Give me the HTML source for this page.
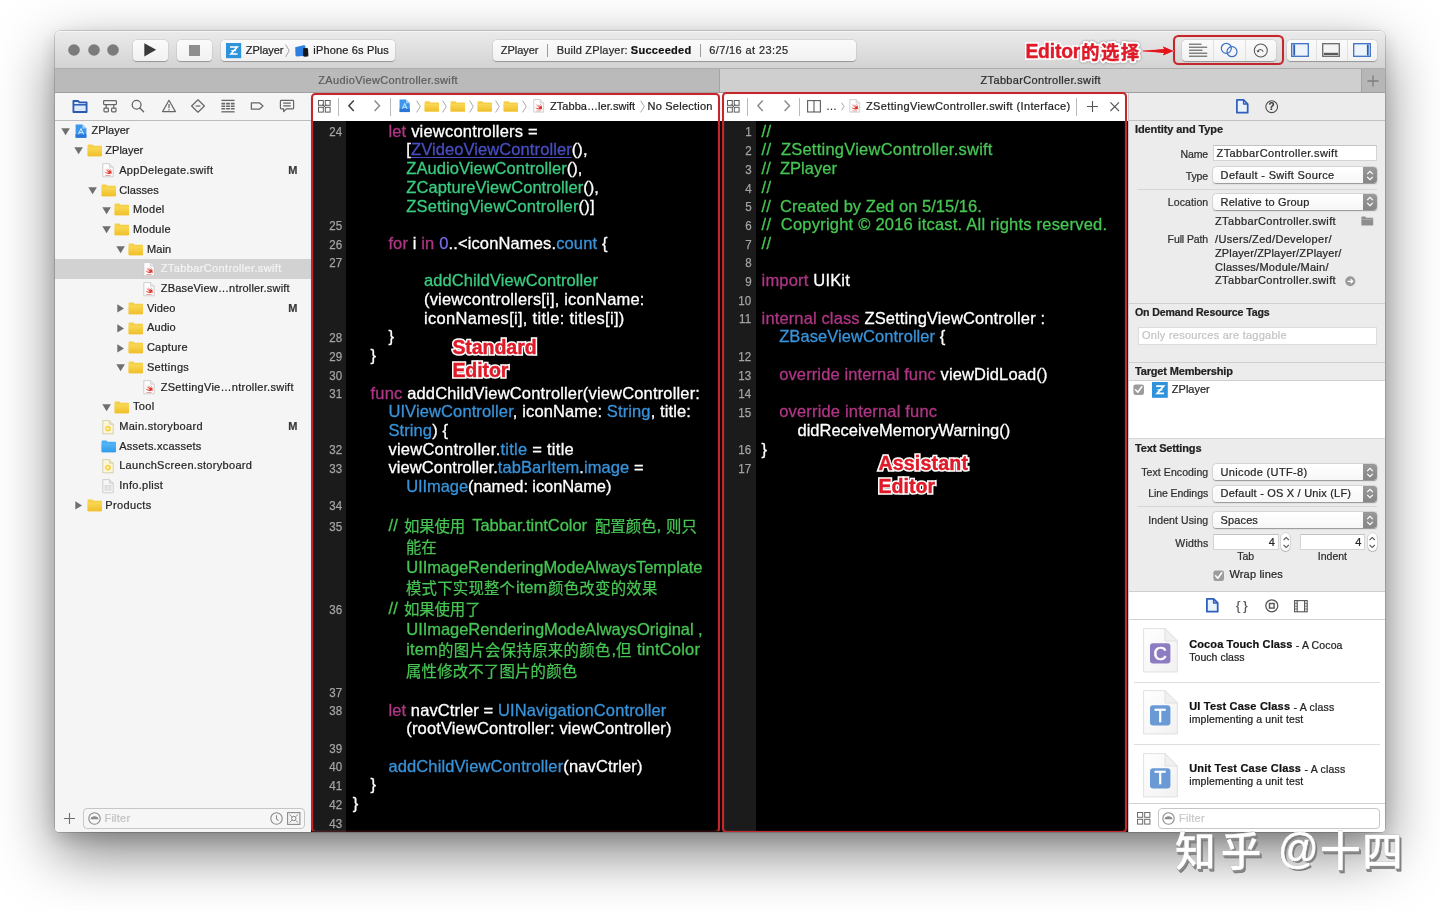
<!DOCTYPE html>
<html><head><meta charset="utf-8"><title>Xcode</title>
<style>
html,body{margin:0;padding:0;}
body{width:1440px;height:911px;position:relative;overflow:hidden;background:#fff;font-family:"Liberation Sans", sans-serif;}
.t{position:absolute;white-space:pre;line-height:1;-webkit-text-stroke:0.22px;}
</style></head><body>
<div style="position:absolute;left:0;top:0;width:1440px;height:911px;will-change:transform;">
<div style="position:absolute;left:55px;top:31px;width:1330px;height:801px;border-radius:5px 5px 4px 4px;background:#ececec;box-shadow:0 0 0 0.5px rgba(0,0,0,0.30),0 21px 56px 0 rgba(0,0,0,0.50),0 6px 18px rgba(0,0,0,0.14);"></div><div style="position:absolute;left:55px;top:31px;width:1330px;height:37px;border-radius:5px 5px 0 0;background:linear-gradient(#ebebeb,#d3d3d3);box-shadow:inset 0 1px 0 #f6f6f6;"></div><div style="position:absolute;left:55px;top:68px;width:1330px;height:1px;background:#adadad;"></div><div style="position:absolute;left:55px;top:69px;width:665px;height:23px;background:#bababa;"></div><div style="position:absolute;left:720px;top:69px;width:642px;height:23px;background:#cfcfcf;"></div><div style="position:absolute;left:719px;top:69px;width:1px;height:23px;background:#a5a5a5;"></div><div style="position:absolute;left:1362px;top:69px;width:23px;height:23px;background:#b6b6b6;"></div><div style="position:absolute;left:1361px;top:69px;width:1px;height:23px;background:#a5a5a5;"></div><div style="position:absolute;left:55px;top:92px;width:1330px;height:1px;background:#a0a0a0;"></div><svg style="position:absolute;left:1367px;top:75px;overflow:visible;" width="12" height="12" viewBox="0 0 12 12"><path d="M6 0.5V11.5M0.5 6H11.5" stroke="#7d7d7d" stroke-width="1.3" fill="none"/></svg><span class="t" style="left:318.30px;top:74.89px;font-size:11px;color:#5c5c5c;letter-spacing:0.348px;">ZAudioViewController.swift</span><span class="t" style="left:980.50px;top:74.89px;font-size:11px;color:#2b2b2b;letter-spacing:0.348px;">ZTabbarController.swift</span><svg style="position:absolute;left:68px;top:44px;overflow:visible;" width="12" height="12" viewBox="0 0 12 12"><circle cx="6" cy="6" r="5.8" fill="#7b7b7b"/></svg><svg style="position:absolute;left:87.5px;top:44px;overflow:visible;" width="12" height="12" viewBox="0 0 12 12"><circle cx="6" cy="6" r="5.8" fill="#7b7b7b"/></svg><svg style="position:absolute;left:107px;top:44px;overflow:visible;" width="12" height="12" viewBox="0 0 12 12"><circle cx="6" cy="6" r="5.8" fill="#7b7b7b"/></svg><div style="position:absolute;left:132.5px;top:40px;width:35.5px;height:20.5px;border-radius:4px;background:linear-gradient(#fbfbfb,#f1f1f1);box-shadow:0 0.5px 1px rgba(0,0,0,0.28),0 0 0 0.5px rgba(0,0,0,0.08);"></div><svg style="position:absolute;left:144px;top:43.3px;overflow:visible;" width="12.5" height="13.6" viewBox="0 0 12.5 13.6"><path d="M0.3 0.2L12.2 6.8L0.3 13.4Z" fill="#3a3a3a"/></svg><div style="position:absolute;left:176.5px;top:40px;width:35.5px;height:20.5px;border-radius:4px;background:linear-gradient(#fbfbfb,#f1f1f1);box-shadow:0 0.5px 1px rgba(0,0,0,0.28),0 0 0 0.5px rgba(0,0,0,0.08);"></div><div style="position:absolute;left:188.8px;top:44.6px;width:11.6px;height:11.2px;background:#8e8e8e;"></div><div style="position:absolute;left:221px;top:40px;width:174px;height:20.5px;border-radius:4px;background:linear-gradient(#fbfbfb,#f1f1f1);box-shadow:0 0.5px 1px rgba(0,0,0,0.28),0 0 0 0.5px rgba(0,0,0,0.08);"></div><svg style="position:absolute;left:225.8px;top:42.5px;overflow:visible;" width="15.2" height="15.2" viewBox="0 0 16 16"><rect width="16" height="16" fill="#2f93dc"/><path d="M4.2 4.2H11.8L5.2 11.6H12.2" stroke="#fff" stroke-width="1.7" fill="none" stroke-linejoin="miter"/><path d="M5.5 8H10.6" stroke="#fff" stroke-width="1.1"/></svg><span class="t" style="left:245.80px;top:44.89px;font-size:11px;color:#222;letter-spacing:-0.029px;">ZPlayer</span><svg style="position:absolute;left:284.6px;top:43.6px;overflow:visible;" width="5" height="13.4" viewBox="0 0 5 13.4"><path d="M0.6 0.5L4.2 6.7L0.6 12.9" stroke="#9a9a9a" stroke-width="0.9" fill="none"/></svg><svg style="position:absolute;left:294px;top:44px;overflow:visible;" width="15" height="13" viewBox="0 0 15 13"><path d="M1.2 3.2L9.5 1.2C10.5 1 11.2 1.5 11.3 2.4L12 10.2C12 11 11.6 11.6 10.8 11.7L3 12.4C2.1 12.4 1.6 12 1.5 11.2Z" fill="#2d7fe0"/><path d="M9.2 4.3L12.6 3.9C13.4 3.8 13.9 4.3 14 5L14.4 11.2C14.4 12 14 12.5 13.2 12.6L10.4 12.8C9.6 12.8 9.2 12.4 9.1 11.6Z" fill="#15171c"/></svg><span class="t" style="left:313.30px;top:44.89px;font-size:11px;color:#222;letter-spacing:0.165px;">iPhone 6s Plus</span><div style="position:absolute;left:492.5px;top:40px;width:363px;height:20.5px;border-radius:4px;background:linear-gradient(#fbfbfb,#f1f1f1);box-shadow:0 0.5px 1px rgba(0,0,0,0.28),0 0 0 0.5px rgba(0,0,0,0.08);"></div><span class="t" style="left:500.80px;top:44.89px;font-size:11px;color:#2a2a2a;letter-spacing:-0.029px;">ZPlayer</span><div style="position:absolute;left:547px;top:44px;width:1px;height:13px;background:#9b9b9b;"></div><span class="t" style="left:556.70px;top:44.89px;font-size:11px;color:#2a2a2a;letter-spacing:0.185px;">Build ZPlayer: </span><span class="t" style="left:630.80px;top:44.89px;font-size:11px;color:#111;font-weight:700;letter-spacing:0.290px;">Succeeded</span><div style="position:absolute;left:700px;top:44px;width:1px;height:13px;background:#9b9b9b;"></div><span class="t" style="left:709.20px;top:44.89px;font-size:11px;color:#2a2a2a;letter-spacing:0.393px;">6/7/16 at 23:25</span><div style="position:absolute;left:1181.7px;top:40px;width:94.2px;height:20.5px;border-radius:4px;background:linear-gradient(#fbfbfb,#f1f1f1);box-shadow:0 0.5px 1px rgba(0,0,0,0.28),0 0 0 0.5px rgba(0,0,0,0.08);"></div><div style="position:absolute;left:1213px;top:40px;width:1px;height:20.5px;background:#e1e1e1;"></div><div style="position:absolute;left:1245px;top:40px;width:1px;height:20.5px;background:#e1e1e1;"></div><svg style="position:absolute;left:1188.5px;top:42.9px;overflow:visible;" width="19" height="14" viewBox="0 0 19 14"><path d="M0 1.2H12.5" stroke="#5a5a5a" stroke-width="1.1"/><path d="M0 4.2H18.2" stroke="#5a5a5a" stroke-width="1.1"/><path d="M0 7.2H13.5" stroke="#5a5a5a" stroke-width="1.1"/><path d="M0 10.2H18.2" stroke="#5a5a5a" stroke-width="1.1"/><path d="M0 13.2H18.2" stroke="#5a5a5a" stroke-width="1.1"/></svg><svg style="position:absolute;left:1220px;top:42px;overflow:visible;" width="20" height="16" viewBox="0 0 20 16"><circle cx="6.3" cy="6.3" r="5" fill="none" stroke="#3b6fc6" stroke-width="1.2"/><circle cx="12" cy="9.7" r="5" fill="none" stroke="#3b6fc6" stroke-width="1.2"/></svg><svg style="position:absolute;left:1253px;top:42.5px;overflow:visible;" width="16" height="16" viewBox="0 0 16 16"><circle cx="7.8" cy="7.5" r="6.5" fill="none" stroke="#5a5a5a" stroke-width="1.1"/><path d="M4.6 8.6C6 5.8 9 5.6 10.2 8.8" fill="none" stroke="#5a5a5a" stroke-width="1.1"/><path d="M3.6 7.2L4.5 9.6L6.8 8.6Z" fill="#5a5a5a"/></svg><div style="position:absolute;left:1286.7px;top:40px;width:90px;height:20.5px;border-radius:4px;background:linear-gradient(#fbfbfb,#f1f1f1);box-shadow:0 0.5px 1px rgba(0,0,0,0.28),0 0 0 0.5px rgba(0,0,0,0.08);"></div><div style="position:absolute;left:1316px;top:40px;width:1px;height:20.5px;background:#e1e1e1;"></div><div style="position:absolute;left:1346.5px;top:40px;width:1px;height:20.5px;background:#e1e1e1;"></div><svg style="position:absolute;left:1290.5px;top:43px;overflow:visible;" width="18" height="14" viewBox="0 0 18 14"><rect x="0.7" y="0.7" width="16.6" height="12.6" fill="#eef4fc" stroke="#3b70c5" stroke-width="1.3"/><path d="M3.2 1.5V12.5" stroke="#2a5cb0" stroke-width="1.8"/></svg><svg style="position:absolute;left:1322px;top:43px;overflow:visible;" width="18" height="14" viewBox="0 0 18 14"><rect x="0.7" y="0.7" width="16.6" height="12.6" fill="#f4f4f4" stroke="#6a6a6a" stroke-width="1.3"/><path d="M1.8 10.9H16.2" stroke="#5a5a5a" stroke-width="2.2"/></svg><svg style="position:absolute;left:1353.2px;top:43px;overflow:visible;" width="18" height="14" viewBox="0 0 18 14"><rect x="0.7" y="0.7" width="16.6" height="12.6" fill="#eef4fc" stroke="#3b70c5" stroke-width="1.3"/><path d="M14.8 1.5V12.5" stroke="#2a5cb0" stroke-width="1.8"/></svg><div style="position:absolute;left:55px;top:93px;width:256px;height:739px;background:#f5f5f5;border-radius:0 0 0 4px;"></div><div style="position:absolute;left:311px;top:93px;width:818px;height:28px;background:#fff;"></div><div style="position:absolute;left:311px;top:120.5px;width:818px;height:711.5px;background:#000;"></div><div style="position:absolute;left:1129px;top:93px;width:256px;height:739px;background:#ececec;border-radius:0 0 4px 0;"></div><div style="position:absolute;left:312px;top:94px;width:406px;height:27px;background:#fff;"></div><div style="position:absolute;left:312px;top:120.5px;width:34px;height:711.5px;background:#1b1b1b;"></div><div style="position:absolute;left:346px;top:120.5px;width:374px;height:711.5px;background:#000;"></div><div style="position:absolute;left:723px;top:94px;width:404px;height:27px;background:#fff;"></div><div style="position:absolute;left:723px;top:120.5px;width:32.5px;height:711.5px;background:#1b1b1b;"></div><div style="position:absolute;left:755.5px;top:120.5px;width:371.5px;height:711.5px;background:#000;"></div><svg style="position:absolute;left:71.6px;top:99.0px;overflow:visible;" width="16" height="14" viewBox="0 0 16 14"><path d="M1.4 2H6.2L7.4 3.4H14.6V13H1.4Z" fill="#dbe9fb" stroke="#2a59b0" stroke-width="1.8" stroke-linejoin="round"/><path d="M1.4 5.8H14.6" stroke="#2a59b0" stroke-width="1.5"/></svg><svg style="position:absolute;left:101.5px;top:99.0px;overflow:visible;" width="16" height="14" viewBox="0 0 16 14"><g fill="none" stroke="#666" stroke-width="1.2"><rect x="1.6" y="1.6" width="12.8" height="4" rx="0.8"/><path d="M4.2 5.6V9.2M11.8 5.6V9.2"/><rect x="2" y="9.2" width="4.4" height="3.6" rx="0.8"/><rect x="9.6" y="9.2" width="4.4" height="3.6" rx="0.8"/></g></svg><svg style="position:absolute;left:130.0px;top:99.0px;overflow:visible;" width="16" height="14" viewBox="0 0 16 14"><g fill="none" stroke="#666" stroke-width="1.3"><circle cx="6.6" cy="5.8" r="4.4"/><path d="M9.8 9L13.6 12.8" stroke-linecap="round"/></g></svg><svg style="position:absolute;left:160.5px;top:99.0px;overflow:visible;" width="16" height="14" viewBox="0 0 16 14"><g fill="none" stroke="#666" stroke-width="1.2" stroke-linejoin="round"><path d="M8 1.2L14.4 12.6H1.6Z"/><path d="M8 5V9.2M8 10.3V11.4"/></g></svg><svg style="position:absolute;left:190.0px;top:99.0px;overflow:visible;" width="16" height="14" viewBox="0 0 16 14"><g fill="none" stroke="#666" stroke-width="1.2" stroke-linejoin="round"><path d="M8 0.8L14.4 7L8 13.2L1.6 7Z"/><path d="M5.6 7H10.4"/></g></svg><svg style="position:absolute;left:219.5px;top:99.0px;overflow:visible;" width="16" height="14" viewBox="0 0 16 14"><g fill="none" stroke="#666"><path d="M1.4 1.4H14.6" stroke-width="1.3"/><path d="M1.4 4.6H14.6M1.4 7.2H14.6M1.4 9.8H14.6" stroke-width="1.6" stroke-dasharray="3.8 0.9"/><path d="M1.4 12.8H14.6" stroke-width="1.3"/></g></svg><svg style="position:absolute;left:249.0px;top:99.0px;overflow:visible;" width="16" height="14" viewBox="0 0 16 14"><path d="M2.4 3.8H10.4L14 7L10.4 10.2H2.4Z" fill="none" stroke="#666" stroke-width="1.25" stroke-linejoin="round"/></svg><svg style="position:absolute;left:278.5px;top:99.0px;overflow:visible;" width="16" height="14" viewBox="0 0 16 14"><g fill="none" stroke="#666" stroke-width="1.2" stroke-linejoin="round"><path d="M2.2 1.4H13.8Q14.6 1.4 14.6 2.2V9Q14.6 9.8 13.8 9.8H7.4L4.6 12.6V9.8H2.2Q1.4 9.8 1.4 9V2.2Q1.4 1.4 2.2 1.4Z"/><path d="M4.2 4.2H11.8M4.2 6.8H11.8"/></g></svg><div style="position:absolute;left:55px;top:120px;width:256px;height:1px;background:#bcbcbc;"></div><svg style="position:absolute;left:60.49999999999999px;top:127.70000000000002px;overflow:visible;" width="9.2" height="7.4" viewBox="0 0 9.2 7.4"><path d="M0.3 0.3H8.9L4.6 7.2Z" fill="#6f6f6f"/></svg><svg style="position:absolute;left:74.9px;top:123.80000000000001px;overflow:visible;" width="12.0" height="14.4" viewBox="0 0 12 14.4"><path d="M0.6 0.6H7.4L11.4 4.4V13.8H0.6Z" fill="#3c97ec"/><path d="M7.4 0.6V4.4H11.4Z" fill="#9fd0fb"/><path d="M0.6 10.2H11.4V13.8H0.6Z" fill="#2a76d6"/><path d="M3.4 10.4L6 4.6L8.6 10.4M4.3 8.6H7.7" fill="none" stroke="#d8ecff" stroke-width="1"/></svg><span class="t" style="left:91.50px;top:125.39px;font-size:11px;color:#262626;letter-spacing:0.013px;">ZPlayer</span><svg style="position:absolute;left:74.35px;top:147.41000000000003px;overflow:visible;" width="9.2" height="7.4" viewBox="0 0 9.2 7.4"><path d="M0.3 0.3H8.9L4.6 7.2Z" fill="#6f6f6f"/></svg><svg style="position:absolute;left:86.75px;top:144.31px;overflow:visible;" width="15.4" height="12.6" viewBox="0 0 15.4 12.6"><defs><linearGradient id="fg867150" x1="0" y1="0" x2="0" y2="1"><stop offset="0" stop-color="#f9d955"/><stop offset="1" stop-color="#f0be2a"/></linearGradient></defs><path d="M0.6 1.2Q0.6 0.4 1.4 0.4H5.4L6.6 1.8H14.2Q15 1.8 15 2.6V11.6Q15 12.3 14.2 12.3H1.4Q0.6 12.3 0.6 11.6Z" fill="#f5cf47"/><path d="M0.6 3.4H15V11.6Q15 12.3 14.2 12.3H1.4Q0.6 12.3 0.6 11.6Z" fill="url(#fg867150)"/></svg><span class="t" style="left:105.35px;top:145.10px;font-size:11px;color:#262626;letter-spacing:-0.008px;">ZPlayer</span><svg style="position:absolute;left:101.9px;top:163.42000000000002px;overflow:visible;" width="12.0" height="14.4" viewBox="0 0 12 14.4"><path d="M0.8 0.6H7.6L11.2 4.2V13.8H0.8Z" fill="#fdfdfd" stroke="#c4c4c4" stroke-width="0.8"/><path d="M7.6 0.6V4.2H11.2" fill="#ececec" stroke="#c4c4c4" stroke-width="0.7"/><path d="M3 5.2C4.6 6.9 6.2 8 7.6 8.6C6.4 7.4 5.4 6.2 4.8 5.2C6.4 6.6 8 7.6 9 8.2C8.6 7 8 5.8 7.2 5C9.2 6.4 10 8.6 9.4 10C9.8 10.4 10 11 9.8 11.2C9.4 10.6 8.8 10.4 8.2 10.7C6.2 11.5 3.8 10.6 2.4 8.6C4 9.6 5.6 9.9 6.8 9.4C5.2 8.2 3.8 6.6 3 5.2Z" fill="#e0362c"/><path d="M3.4 12.5H8.6" stroke="#e58a84" stroke-width="0.8"/></svg><span class="t" style="left:119.20px;top:164.81px;font-size:11px;color:#262626;letter-spacing:0.325px;">AppDelegate.swift</span><span class="t" style="left:288.20px;top:164.81px;font-size:11px;color:#3a3a3a;font-weight:700;letter-spacing:0.028px;">M</span><svg style="position:absolute;left:88.20000000000002px;top:186.83px;overflow:visible;" width="9.2" height="7.4" viewBox="0 0 9.2 7.4"><path d="M0.3 0.3H8.9L4.6 7.2Z" fill="#6f6f6f"/></svg><svg style="position:absolute;left:100.6px;top:183.73px;overflow:visible;" width="15.4" height="12.6" viewBox="0 0 15.4 12.6"><defs><linearGradient id="fg1006190" x1="0" y1="0" x2="0" y2="1"><stop offset="0" stop-color="#f9d955"/><stop offset="1" stop-color="#f0be2a"/></linearGradient></defs><path d="M0.6 1.2Q0.6 0.4 1.4 0.4H5.4L6.6 1.8H14.2Q15 1.8 15 2.6V11.6Q15 12.3 14.2 12.3H1.4Q0.6 12.3 0.6 11.6Z" fill="#f5cf47"/><path d="M0.6 3.4H15V11.6Q15 12.3 14.2 12.3H1.4Q0.6 12.3 0.6 11.6Z" fill="url(#fg1006190)"/></svg><span class="t" style="left:119.20px;top:184.52px;font-size:11px;color:#262626;letter-spacing:0.068px;">Classes</span><svg style="position:absolute;left:102.05000000000001px;top:206.54000000000002px;overflow:visible;" width="9.2" height="7.4" viewBox="0 0 9.2 7.4"><path d="M0.3 0.3H8.9L4.6 7.2Z" fill="#6f6f6f"/></svg><svg style="position:absolute;left:114.45000000000002px;top:203.44px;overflow:visible;" width="15.4" height="12.6" viewBox="0 0 15.4 12.6"><defs><linearGradient id="fg1144209" x1="0" y1="0" x2="0" y2="1"><stop offset="0" stop-color="#f9d955"/><stop offset="1" stop-color="#f0be2a"/></linearGradient></defs><path d="M0.6 1.2Q0.6 0.4 1.4 0.4H5.4L6.6 1.8H14.2Q15 1.8 15 2.6V11.6Q15 12.3 14.2 12.3H1.4Q0.6 12.3 0.6 11.6Z" fill="#f5cf47"/><path d="M0.6 3.4H15V11.6Q15 12.3 14.2 12.3H1.4Q0.6 12.3 0.6 11.6Z" fill="url(#fg1144209)"/></svg><span class="t" style="left:133.05px;top:204.23px;font-size:11px;color:#262626;letter-spacing:0.316px;">Model</span><svg style="position:absolute;left:102.05000000000001px;top:226.25000000000003px;overflow:visible;" width="9.2" height="7.4" viewBox="0 0 9.2 7.4"><path d="M0.3 0.3H8.9L4.6 7.2Z" fill="#6f6f6f"/></svg><svg style="position:absolute;left:114.45000000000002px;top:223.15px;overflow:visible;" width="15.4" height="12.6" viewBox="0 0 15.4 12.6"><defs><linearGradient id="fg1144229" x1="0" y1="0" x2="0" y2="1"><stop offset="0" stop-color="#f9d955"/><stop offset="1" stop-color="#f0be2a"/></linearGradient></defs><path d="M0.6 1.2Q0.6 0.4 1.4 0.4H5.4L6.6 1.8H14.2Q15 1.8 15 2.6V11.6Q15 12.3 14.2 12.3H1.4Q0.6 12.3 0.6 11.6Z" fill="#f5cf47"/><path d="M0.6 3.4H15V11.6Q15 12.3 14.2 12.3H1.4Q0.6 12.3 0.6 11.6Z" fill="url(#fg1144229)"/></svg><span class="t" style="left:133.05px;top:223.94px;font-size:11px;color:#262626;letter-spacing:0.279px;">Module</span><svg style="position:absolute;left:115.9px;top:245.96px;overflow:visible;" width="9.2" height="7.4" viewBox="0 0 9.2 7.4"><path d="M0.3 0.3H8.9L4.6 7.2Z" fill="#6f6f6f"/></svg><svg style="position:absolute;left:128.3px;top:242.85999999999999px;overflow:visible;" width="15.4" height="12.6" viewBox="0 0 15.4 12.6"><defs><linearGradient id="fg1283249" x1="0" y1="0" x2="0" y2="1"><stop offset="0" stop-color="#f9d955"/><stop offset="1" stop-color="#f0be2a"/></linearGradient></defs><path d="M0.6 1.2Q0.6 0.4 1.4 0.4H5.4L6.6 1.8H14.2Q15 1.8 15 2.6V11.6Q15 12.3 14.2 12.3H1.4Q0.6 12.3 0.6 11.6Z" fill="#f5cf47"/><path d="M0.6 3.4H15V11.6Q15 12.3 14.2 12.3H1.4Q0.6 12.3 0.6 11.6Z" fill="url(#fg1283249)"/></svg><span class="t" style="left:146.90px;top:243.65px;font-size:11px;color:#262626;letter-spacing:0.114px;">Main</span><div style="position:absolute;left:55px;top:259.37px;width:256px;height:19.2px;background:#d2d2d2;"></div><svg style="position:absolute;left:143.45px;top:261.97px;overflow:visible;" width="12.0" height="14.4" viewBox="0 0 12 14.4"><path d="M0.8 0.6H7.6L11.2 4.2V13.8H0.8Z" fill="#fdfdfd" stroke="#c4c4c4" stroke-width="0.8"/><path d="M7.6 0.6V4.2H11.2" fill="#ececec" stroke="#c4c4c4" stroke-width="0.7"/><path d="M3 5.2C4.6 6.9 6.2 8 7.6 8.6C6.4 7.4 5.4 6.2 4.8 5.2C6.4 6.6 8 7.6 9 8.2C8.6 7 8 5.8 7.2 5C9.2 6.4 10 8.6 9.4 10C9.8 10.4 10 11 9.8 11.2C9.4 10.6 8.8 10.4 8.2 10.7C6.2 11.5 3.8 10.6 2.4 8.6C4 9.6 5.6 9.9 6.8 9.4C5.2 8.2 3.8 6.6 3 5.2Z" fill="#e0362c"/><path d="M3.4 12.5H8.6" stroke="#e58a84" stroke-width="0.8"/></svg><span class="t" style="left:160.75px;top:263.36px;font-size:11px;color:#f4f4f4;letter-spacing:0.367px;">ZTabbarController.swift</span><svg style="position:absolute;left:143.45px;top:281.68px;overflow:visible;" width="12.0" height="14.4" viewBox="0 0 12 14.4"><path d="M0.8 0.6H7.6L11.2 4.2V13.8H0.8Z" fill="#fdfdfd" stroke="#c4c4c4" stroke-width="0.8"/><path d="M7.6 0.6V4.2H11.2" fill="#ececec" stroke="#c4c4c4" stroke-width="0.7"/><path d="M3 5.2C4.6 6.9 6.2 8 7.6 8.6C6.4 7.4 5.4 6.2 4.8 5.2C6.4 6.6 8 7.6 9 8.2C8.6 7 8 5.8 7.2 5C9.2 6.4 10 8.6 9.4 10C9.8 10.4 10 11 9.8 11.2C9.4 10.6 8.8 10.4 8.2 10.7C6.2 11.5 3.8 10.6 2.4 8.6C4 9.6 5.6 9.9 6.8 9.4C5.2 8.2 3.8 6.6 3 5.2Z" fill="#e0362c"/><path d="M3.4 12.5H8.6" stroke="#e58a84" stroke-width="0.8"/></svg><span class="t" style="left:160.75px;top:283.07px;font-size:11px;color:#262626;letter-spacing:0.189px;">ZBaseView…ntroller.swift</span><svg style="position:absolute;left:116.9px;top:304.19px;overflow:visible;" width="7.2" height="8.8" viewBox="0 0 7.2 8.8"><path d="M0.3 0.3V8.5L7 4.4Z" fill="#6f6f6f"/></svg><svg style="position:absolute;left:128.3px;top:301.99px;overflow:visible;" width="15.4" height="12.6" viewBox="0 0 15.4 12.6"><defs><linearGradient id="fg1283308" x1="0" y1="0" x2="0" y2="1"><stop offset="0" stop-color="#f9d955"/><stop offset="1" stop-color="#f0be2a"/></linearGradient></defs><path d="M0.6 1.2Q0.6 0.4 1.4 0.4H5.4L6.6 1.8H14.2Q15 1.8 15 2.6V11.6Q15 12.3 14.2 12.3H1.4Q0.6 12.3 0.6 11.6Z" fill="#f5cf47"/><path d="M0.6 3.4H15V11.6Q15 12.3 14.2 12.3H1.4Q0.6 12.3 0.6 11.6Z" fill="url(#fg1283308)"/></svg><span class="t" style="left:146.90px;top:302.78px;font-size:11px;color:#262626;letter-spacing:0.152px;">Video</span><span class="t" style="left:288.20px;top:302.78px;font-size:11px;color:#3a3a3a;font-weight:700;letter-spacing:0.028px;">M</span><svg style="position:absolute;left:116.9px;top:323.90000000000003px;overflow:visible;" width="7.2" height="8.8" viewBox="0 0 7.2 8.8"><path d="M0.3 0.3V8.5L7 4.4Z" fill="#6f6f6f"/></svg><svg style="position:absolute;left:128.3px;top:321.70000000000005px;overflow:visible;" width="15.4" height="12.6" viewBox="0 0 15.4 12.6"><defs><linearGradient id="fg1283328" x1="0" y1="0" x2="0" y2="1"><stop offset="0" stop-color="#f9d955"/><stop offset="1" stop-color="#f0be2a"/></linearGradient></defs><path d="M0.6 1.2Q0.6 0.4 1.4 0.4H5.4L6.6 1.8H14.2Q15 1.8 15 2.6V11.6Q15 12.3 14.2 12.3H1.4Q0.6 12.3 0.6 11.6Z" fill="#f5cf47"/><path d="M0.6 3.4H15V11.6Q15 12.3 14.2 12.3H1.4Q0.6 12.3 0.6 11.6Z" fill="url(#fg1283328)"/></svg><span class="t" style="left:146.90px;top:322.49px;font-size:11px;color:#262626;letter-spacing:0.152px;">Audio</span><svg style="position:absolute;left:116.9px;top:343.61px;overflow:visible;" width="7.2" height="8.8" viewBox="0 0 7.2 8.8"><path d="M0.3 0.3V8.5L7 4.4Z" fill="#6f6f6f"/></svg><svg style="position:absolute;left:128.3px;top:341.41px;overflow:visible;" width="15.4" height="12.6" viewBox="0 0 15.4 12.6"><defs><linearGradient id="fg1283347" x1="0" y1="0" x2="0" y2="1"><stop offset="0" stop-color="#f9d955"/><stop offset="1" stop-color="#f0be2a"/></linearGradient></defs><path d="M0.6 1.2Q0.6 0.4 1.4 0.4H5.4L6.6 1.8H14.2Q15 1.8 15 2.6V11.6Q15 12.3 14.2 12.3H1.4Q0.6 12.3 0.6 11.6Z" fill="#f5cf47"/><path d="M0.6 3.4H15V11.6Q15 12.3 14.2 12.3H1.4Q0.6 12.3 0.6 11.6Z" fill="url(#fg1283347)"/></svg><span class="t" style="left:146.90px;top:342.20px;font-size:11px;color:#262626;letter-spacing:0.251px;">Capture</span><svg style="position:absolute;left:115.9px;top:364.21999999999997px;overflow:visible;" width="9.2" height="7.4" viewBox="0 0 9.2 7.4"><path d="M0.3 0.3H8.9L4.6 7.2Z" fill="#6f6f6f"/></svg><svg style="position:absolute;left:128.3px;top:361.12px;overflow:visible;" width="15.4" height="12.6" viewBox="0 0 15.4 12.6"><defs><linearGradient id="fg1283367" x1="0" y1="0" x2="0" y2="1"><stop offset="0" stop-color="#f9d955"/><stop offset="1" stop-color="#f0be2a"/></linearGradient></defs><path d="M0.6 1.2Q0.6 0.4 1.4 0.4H5.4L6.6 1.8H14.2Q15 1.8 15 2.6V11.6Q15 12.3 14.2 12.3H1.4Q0.6 12.3 0.6 11.6Z" fill="#f5cf47"/><path d="M0.6 3.4H15V11.6Q15 12.3 14.2 12.3H1.4Q0.6 12.3 0.6 11.6Z" fill="url(#fg1283367)"/></svg><span class="t" style="left:146.90px;top:361.91px;font-size:11px;color:#262626;letter-spacing:0.319px;">Settings</span><svg style="position:absolute;left:143.45px;top:380.23px;overflow:visible;" width="12.0" height="14.4" viewBox="0 0 12 14.4"><path d="M0.8 0.6H7.6L11.2 4.2V13.8H0.8Z" fill="#fdfdfd" stroke="#c4c4c4" stroke-width="0.8"/><path d="M7.6 0.6V4.2H11.2" fill="#ececec" stroke="#c4c4c4" stroke-width="0.7"/><path d="M3 5.2C4.6 6.9 6.2 8 7.6 8.6C6.4 7.4 5.4 6.2 4.8 5.2C6.4 6.6 8 7.6 9 8.2C8.6 7 8 5.8 7.2 5C9.2 6.4 10 8.6 9.4 10C9.8 10.4 10 11 9.8 11.2C9.4 10.6 8.8 10.4 8.2 10.7C6.2 11.5 3.8 10.6 2.4 8.6C4 9.6 5.6 9.9 6.8 9.4C5.2 8.2 3.8 6.6 3 5.2Z" fill="#e0362c"/><path d="M3.4 12.5H8.6" stroke="#e58a84" stroke-width="0.8"/></svg><span class="t" style="left:160.75px;top:381.62px;font-size:11px;color:#262626;letter-spacing:0.281px;">ZSettingVie…ntroller.swift</span><svg style="position:absolute;left:102.05000000000001px;top:403.64px;overflow:visible;" width="9.2" height="7.4" viewBox="0 0 9.2 7.4"><path d="M0.3 0.3H8.9L4.6 7.2Z" fill="#6f6f6f"/></svg><svg style="position:absolute;left:114.45000000000002px;top:400.54px;overflow:visible;" width="15.4" height="12.6" viewBox="0 0 15.4 12.6"><defs><linearGradient id="fg1144406" x1="0" y1="0" x2="0" y2="1"><stop offset="0" stop-color="#f9d955"/><stop offset="1" stop-color="#f0be2a"/></linearGradient></defs><path d="M0.6 1.2Q0.6 0.4 1.4 0.4H5.4L6.6 1.8H14.2Q15 1.8 15 2.6V11.6Q15 12.3 14.2 12.3H1.4Q0.6 12.3 0.6 11.6Z" fill="#f5cf47"/><path d="M0.6 3.4H15V11.6Q15 12.3 14.2 12.3H1.4Q0.6 12.3 0.6 11.6Z" fill="url(#fg1144406)"/></svg><span class="t" style="left:133.05px;top:401.33px;font-size:11px;color:#262626;letter-spacing:0.291px;">Tool</span><svg style="position:absolute;left:101.9px;top:419.65000000000003px;overflow:visible;" width="12" height="14.4" viewBox="0 0 12 14.4"><path d="M0.8 0.6H7.6L11.2 4.2V13.8H0.8Z" fill="#fbf6d8" stroke="#cdc7a0" stroke-width="0.8"/><path d="M7.6 0.6V4.2H11.2" fill="#efe9c4" stroke="#cdc7a0" stroke-width="0.7"/><circle cx="6" cy="8.6" r="2.9" fill="#f3d24a"/><path d="M4.8 7.2L7.6 8.6L4.8 10Z" fill="#fffbe0"/></svg><span class="t" style="left:119.20px;top:421.04px;font-size:11px;color:#262626;letter-spacing:0.322px;">Main.storyboard</span><span class="t" style="left:288.20px;top:421.04px;font-size:11px;color:#3a3a3a;font-weight:700;letter-spacing:0.028px;">M</span><svg style="position:absolute;left:100.6px;top:439.96000000000004px;overflow:visible;" width="15.4" height="12.6" viewBox="0 0 15.4 12.6"><defs><linearGradient id="fg1006446" x1="0" y1="0" x2="0" y2="1"><stop offset="0" stop-color="#55b6f6"/><stop offset="1" stop-color="#2f9be8"/></linearGradient></defs><path d="M0.6 1.2Q0.6 0.4 1.4 0.4H5.4L6.6 1.8H14.2Q15 1.8 15 2.6V11.6Q15 12.3 14.2 12.3H1.4Q0.6 12.3 0.6 11.6Z" fill="#4aaef2"/><path d="M0.6 3.4H15V11.6Q15 12.3 14.2 12.3H1.4Q0.6 12.3 0.6 11.6Z" fill="url(#fg1006446)"/></svg><span class="t" style="left:119.20px;top:440.75px;font-size:11px;color:#262626;letter-spacing:0.236px;">Assets.xcassets</span><svg style="position:absolute;left:101.9px;top:459.07px;overflow:visible;" width="12" height="14.4" viewBox="0 0 12 14.4"><path d="M0.8 0.6H7.6L11.2 4.2V13.8H0.8Z" fill="#fbf6d8" stroke="#cdc7a0" stroke-width="0.8"/><path d="M7.6 0.6V4.2H11.2" fill="#efe9c4" stroke="#cdc7a0" stroke-width="0.7"/><circle cx="6" cy="8.6" r="2.9" fill="#f3d24a"/><path d="M4.8 7.2L7.6 8.6L4.8 10Z" fill="#fffbe0"/></svg><span class="t" style="left:119.20px;top:460.46px;font-size:11px;color:#262626;letter-spacing:0.306px;">LaunchScreen.storyboard</span><svg style="position:absolute;left:101.9px;top:478.78000000000003px;overflow:visible;" width="12" height="14.4" viewBox="0 0 12 14.4"><path d="M0.8 0.6H7.6L11.2 4.2V13.8H0.8Z" fill="#f6f6f6" stroke="#c4c4c4" stroke-width="0.8"/><path d="M7.6 0.6V4.2H11.2" fill="#e6e6e6" stroke="#c4c4c4" stroke-width="0.7"/><rect x="2.6" y="6" width="6.8" height="5.6" fill="#d6d6d6"/><path d="M2.6 8H9.4M2.6 9.8H9.4M6 6V11.6" stroke="#f6f6f6" stroke-width="0.6"/></svg><span class="t" style="left:119.20px;top:480.17px;font-size:11px;color:#262626;letter-spacing:0.303px;">Info.plist</span><svg style="position:absolute;left:75.35px;top:501.29px;overflow:visible;" width="7.2" height="8.8" viewBox="0 0 7.2 8.8"><path d="M0.3 0.3V8.5L7 4.4Z" fill="#6f6f6f"/></svg><svg style="position:absolute;left:86.75px;top:499.09000000000003px;overflow:visible;" width="15.4" height="12.6" viewBox="0 0 15.4 12.6"><defs><linearGradient id="fg867505" x1="0" y1="0" x2="0" y2="1"><stop offset="0" stop-color="#f9d955"/><stop offset="1" stop-color="#f0be2a"/></linearGradient></defs><path d="M0.6 1.2Q0.6 0.4 1.4 0.4H5.4L6.6 1.8H14.2Q15 1.8 15 2.6V11.6Q15 12.3 14.2 12.3H1.4Q0.6 12.3 0.6 11.6Z" fill="#f5cf47"/><path d="M0.6 3.4H15V11.6Q15 12.3 14.2 12.3H1.4Q0.6 12.3 0.6 11.6Z" fill="url(#fg867505)"/></svg><span class="t" style="left:105.35px;top:499.88px;font-size:11px;color:#262626;letter-spacing:0.354px;">Products</span><svg style="position:absolute;left:64.3px;top:813.3px;overflow:visible;" width="11" height="11" viewBox="0 0 11 11"><path d="M5.5 0V11M0 5.5H11" stroke="#6f6f6f" stroke-width="1.1"/></svg><div style="position:absolute;left:83px;top:808px;width:222px;height:20.5px;box-sizing:border-box;border:1px solid #c6c6c6;border-radius:4px;background:#f6f6f6;"></div><svg style="position:absolute;left:87.5px;top:812px;overflow:visible;" width="13" height="13" viewBox="0 0 13 13"><circle cx="6.5" cy="6.5" r="5.7" fill="none" stroke="#8a8a8a" stroke-width="1.1"/><path d="M2.6 7.2C2.6 3.4 10.4 3.4 10.4 7.2Z" fill="#8a8a8a"/></svg><span class="t" style="left:104.50px;top:813.09px;font-size:11px;color:#c2c2c2;letter-spacing:0.224px;">Filter</span><svg style="position:absolute;left:269.5px;top:812px;overflow:visible;" width="13" height="13" viewBox="0 0 13 13"><circle cx="6.5" cy="6.5" r="5.7" fill="none" stroke="#8a8a8a" stroke-width="1.1"/><path d="M6.5 3.2V6.8L8.6 8.6" fill="none" stroke="#8a8a8a" stroke-width="1.1"/></svg><svg style="position:absolute;left:286.5px;top:812px;overflow:visible;" width="13.5" height="13" viewBox="0 0 13.5 13"><rect x="0.6" y="0.6" width="12.3" height="11.8" fill="none" stroke="#8a8a8a" stroke-width="1.1"/><circle cx="6.75" cy="6.5" r="2.2" fill="none" stroke="#8a8a8a" stroke-width="1"/><path d="M2.4 2.4L5.2 5M11.1 2.4L8.3 5M2.4 10.6L5.2 8M11.1 10.6L8.3 8" stroke="#8a8a8a" stroke-width="0.9"/></svg><svg style="position:absolute;left:317.8px;top:100.4px;overflow:visible;" width="12.6" height="12.6" viewBox="0 0 12.6 12.6"><g fill="none" stroke="#5c5c5c" stroke-width="1"><rect x="0.5" y="0.5" width="4.8" height="4.8"/><rect x="7.3" y="0.5" width="4.8" height="4.8"/><rect x="0.5" y="7.3" width="4.8" height="4.8"/><rect x="7.3" y="7.3" width="4.8" height="4.8"/><path d="M4.4 4.4L8.2 8.2M8.2 4.4L4.4 8.2" stroke-width="0.9"/></g></svg><div style="position:absolute;left:338px;top:98px;width:1px;height:17.5px;background:#b9b9b9;"></div><svg style="position:absolute;left:348px;top:100.4px;overflow:visible;" width="6.4" height="11.5" viewBox="0 0 6.4 11.5"><path d="M5.800000000000001 0.6L0.9 5.75L5.800000000000001 10.9" fill="none" stroke="#3f3f3f" stroke-width="1.5"/></svg><svg style="position:absolute;left:374.4px;top:100.4px;overflow:visible;" width="6.4" height="11.5" viewBox="0 0 6.4 11.5"><path d="M0.6 0.6L5.5 5.75L0.6 10.9" fill="none" stroke="#8c8c8c" stroke-width="1.5"/></svg><div style="position:absolute;left:389.5px;top:98px;width:1px;height:17.5px;background:#b9b9b9;"></div><svg style="position:absolute;left:399px;top:99.35px;overflow:visible;" width="11.399999999999999" height="13.68" viewBox="0 0 12 14.4"><path d="M0.6 0.6H7.4L11.4 4.4V13.8H0.6Z" fill="#3c97ec"/><path d="M7.4 0.6V4.4H11.4Z" fill="#9fd0fb"/><path d="M0.6 10.2H11.4V13.8H0.6Z" fill="#2a76d6"/><path d="M3.4 10.4L6 4.6L8.6 10.4M4.3 8.6H7.7" fill="none" stroke="#d8ecff" stroke-width="1"/></svg><svg style="position:absolute;left:415.6px;top:99.5px;overflow:visible;" width="5.2" height="13" viewBox="0 0 5.2 13"><path d="M0.6 0.6L4.3 6.5L0.6 12.4" fill="none" stroke="#9c9c9c" stroke-width="0.9"/></svg><svg style="position:absolute;left:423.8px;top:100.896px;overflow:visible;" width="15.4" height="10.836" viewBox="0 0 15.4 12.6" preserveAspectRatio="none"><defs><linearGradient id="fg4238106" x1="0" y1="0" x2="0" y2="1"><stop offset="0" stop-color="#f9d955"/><stop offset="1" stop-color="#f0be2a"/></linearGradient></defs><path d="M0.6 1.2Q0.6 0.4 1.4 0.4H5.4L6.6 1.8H14.2Q15 1.8 15 2.6V11.6Q15 12.3 14.2 12.3H1.4Q0.6 12.3 0.6 11.6Z" fill="#f5cf47"/><path d="M0.6 3.4H15V11.6Q15 12.3 14.2 12.3H1.4Q0.6 12.3 0.6 11.6Z" fill="url(#fg4238106)"/></svg><svg style="position:absolute;left:442.0px;top:99.5px;overflow:visible;" width="5.2" height="13" viewBox="0 0 5.2 13"><path d="M0.6 0.6L4.3 6.5L0.6 12.4" fill="none" stroke="#9c9c9c" stroke-width="0.9"/></svg><svg style="position:absolute;left:450.3px;top:100.896px;overflow:visible;" width="15.4" height="10.836" viewBox="0 0 15.4 12.6" preserveAspectRatio="none"><defs><linearGradient id="fg4503106" x1="0" y1="0" x2="0" y2="1"><stop offset="0" stop-color="#f9d955"/><stop offset="1" stop-color="#f0be2a"/></linearGradient></defs><path d="M0.6 1.2Q0.6 0.4 1.4 0.4H5.4L6.6 1.8H14.2Q15 1.8 15 2.6V11.6Q15 12.3 14.2 12.3H1.4Q0.6 12.3 0.6 11.6Z" fill="#f5cf47"/><path d="M0.6 3.4H15V11.6Q15 12.3 14.2 12.3H1.4Q0.6 12.3 0.6 11.6Z" fill="url(#fg4503106)"/></svg><svg style="position:absolute;left:468.5px;top:99.5px;overflow:visible;" width="5.2" height="13" viewBox="0 0 5.2 13"><path d="M0.6 0.6L4.3 6.5L0.6 12.4" fill="none" stroke="#9c9c9c" stroke-width="0.9"/></svg><svg style="position:absolute;left:476.8px;top:100.896px;overflow:visible;" width="15.4" height="10.836" viewBox="0 0 15.4 12.6" preserveAspectRatio="none"><defs><linearGradient id="fg4768106" x1="0" y1="0" x2="0" y2="1"><stop offset="0" stop-color="#f9d955"/><stop offset="1" stop-color="#f0be2a"/></linearGradient></defs><path d="M0.6 1.2Q0.6 0.4 1.4 0.4H5.4L6.6 1.8H14.2Q15 1.8 15 2.6V11.6Q15 12.3 14.2 12.3H1.4Q0.6 12.3 0.6 11.6Z" fill="#f5cf47"/><path d="M0.6 3.4H15V11.6Q15 12.3 14.2 12.3H1.4Q0.6 12.3 0.6 11.6Z" fill="url(#fg4768106)"/></svg><svg style="position:absolute;left:495.0px;top:99.5px;overflow:visible;" width="5.2" height="13" viewBox="0 0 5.2 13"><path d="M0.6 0.6L4.3 6.5L0.6 12.4" fill="none" stroke="#9c9c9c" stroke-width="0.9"/></svg><svg style="position:absolute;left:503.3px;top:100.896px;overflow:visible;" width="15.4" height="10.836" viewBox="0 0 15.4 12.6" preserveAspectRatio="none"><defs><linearGradient id="fg5033106" x1="0" y1="0" x2="0" y2="1"><stop offset="0" stop-color="#f9d955"/><stop offset="1" stop-color="#f0be2a"/></linearGradient></defs><path d="M0.6 1.2Q0.6 0.4 1.4 0.4H5.4L6.6 1.8H14.2Q15 1.8 15 2.6V11.6Q15 12.3 14.2 12.3H1.4Q0.6 12.3 0.6 11.6Z" fill="#f5cf47"/><path d="M0.6 3.4H15V11.6Q15 12.3 14.2 12.3H1.4Q0.6 12.3 0.6 11.6Z" fill="url(#fg5033106)"/></svg><svg style="position:absolute;left:521.9px;top:99.5px;overflow:visible;" width="5.2" height="13" viewBox="0 0 5.2 13"><path d="M0.6 0.6L4.3 6.5L0.6 12.4" fill="none" stroke="#9c9c9c" stroke-width="0.9"/></svg><svg style="position:absolute;left:532.6px;top:99.35px;overflow:visible;" width="11.399999999999999" height="13.68" viewBox="0 0 12 14.4"><path d="M0.8 0.6H7.6L11.2 4.2V13.8H0.8Z" fill="#fdfdfd" stroke="#c4c4c4" stroke-width="0.8"/><path d="M7.6 0.6V4.2H11.2" fill="#ececec" stroke="#c4c4c4" stroke-width="0.7"/><path d="M3 5.2C4.6 6.9 6.2 8 7.6 8.6C6.4 7.4 5.4 6.2 4.8 5.2C6.4 6.6 8 7.6 9 8.2C8.6 7 8 5.8 7.2 5C9.2 6.4 10 8.6 9.4 10C9.8 10.4 10 11 9.8 11.2C9.4 10.6 8.8 10.4 8.2 10.7C6.2 11.5 3.8 10.6 2.4 8.6C4 9.6 5.6 9.9 6.8 9.4C5.2 8.2 3.8 6.6 3 5.2Z" fill="#e0362c"/><path d="M3.4 12.5H8.6" stroke="#e58a84" stroke-width="0.8"/></svg><span class="t" style="left:550.00px;top:100.69px;font-size:11px;color:#1f1f1f;letter-spacing:0.052px;">ZTabba…ler.swift</span><svg style="position:absolute;left:640px;top:99.5px;overflow:visible;" width="5.2" height="13" viewBox="0 0 5.2 13"><path d="M0.6 0.6L4.3 6.5L0.6 12.4" fill="none" stroke="#9c9c9c" stroke-width="0.9"/></svg><span class="t" style="left:647.50px;top:100.69px;font-size:11px;color:#1f1f1f;letter-spacing:0.227px;">No Selection</span><svg style="position:absolute;left:726.8px;top:100.4px;overflow:visible;" width="12.6" height="12.6" viewBox="0 0 12.6 12.6"><g fill="none" stroke="#5c5c5c" stroke-width="1"><rect x="0.5" y="0.5" width="4.8" height="4.8"/><rect x="7.3" y="0.5" width="4.8" height="4.8"/><rect x="0.5" y="7.3" width="4.8" height="4.8"/><rect x="7.3" y="7.3" width="4.8" height="4.8"/><path d="M4.4 4.4L8.2 8.2M8.2 4.4L4.4 8.2" stroke-width="0.9"/></g></svg><div style="position:absolute;left:747px;top:98px;width:1px;height:17.5px;background:#b9b9b9;"></div><svg style="position:absolute;left:756.6px;top:100.4px;overflow:visible;" width="6.4" height="11.5" viewBox="0 0 6.4 11.5"><path d="M5.800000000000001 0.6L0.9 5.75L5.800000000000001 10.9" fill="none" stroke="#8c8c8c" stroke-width="1.5"/></svg><svg style="position:absolute;left:784.2px;top:100.4px;overflow:visible;" width="6.4" height="11.5" viewBox="0 0 6.4 11.5"><path d="M0.6 0.6L5.5 5.75L0.6 10.9" fill="none" stroke="#8c8c8c" stroke-width="1.5"/></svg><div style="position:absolute;left:798.8px;top:98px;width:1px;height:17.5px;background:#b9b9b9;"></div><svg style="position:absolute;left:806.5px;top:100.2px;overflow:visible;" width="14" height="12.6" viewBox="0 0 14 12.6"><g fill="none" stroke="#5c5c5c" stroke-width="1.1"><rect x="0.6" y="0.6" width="12.8" height="11.4"/><path d="M7 0.6V12"/></g></svg><span class="t" style="left:826.00px;top:100.69px;font-size:11px;color:#333;letter-spacing:-0.900px;">…</span><svg style="position:absolute;left:841px;top:101.5px;overflow:visible;" width="3.8" height="9" viewBox="0 0 3.8 9"><path d="M0.6 0.6L2.9 4.5L0.6 8.4" fill="none" stroke="#9c9c9c" stroke-width="0.9"/></svg><svg style="position:absolute;left:848.6px;top:99.35px;overflow:visible;" width="11.399999999999999" height="13.68" viewBox="0 0 12 14.4"><path d="M0.8 0.6H7.6L11.2 4.2V13.8H0.8Z" fill="#fdfdfd" stroke="#c4c4c4" stroke-width="0.8"/><path d="M7.6 0.6V4.2H11.2" fill="#ececec" stroke="#c4c4c4" stroke-width="0.7"/><path d="M3 5.2C4.6 6.9 6.2 8 7.6 8.6C6.4 7.4 5.4 6.2 4.8 5.2C6.4 6.6 8 7.6 9 8.2C8.6 7 8 5.8 7.2 5C9.2 6.4 10 8.6 9.4 10C9.8 10.4 10 11 9.8 11.2C9.4 10.6 8.8 10.4 8.2 10.7C6.2 11.5 3.8 10.6 2.4 8.6C4 9.6 5.6 9.9 6.8 9.4C5.2 8.2 3.8 6.6 3 5.2Z" fill="#e0362c"/><path d="M3.4 12.5H8.6" stroke="#e58a84" stroke-width="0.8"/></svg><span class="t" style="left:866.00px;top:100.69px;font-size:11px;color:#1f1f1f;letter-spacing:0.367px;">ZSettingViewController.swift (Interface)</span><div style="position:absolute;left:1076px;top:98px;width:1px;height:17.5px;background:#b9b9b9;"></div><svg style="position:absolute;left:1087.2px;top:100.8px;overflow:visible;" width="11" height="11" viewBox="0 0 11 11"><path d="M5.5 0V11M0 5.5H11" stroke="#555" stroke-width="1.1"/></svg><svg style="position:absolute;left:1109.6px;top:101.6px;overflow:visible;" width="9.4" height="9.4" viewBox="0 0 9.4 9.4"><path d="M0.4 0.4L9 9M9 0.4L0.4 9" stroke="#555" stroke-width="1.1"/></svg><span class="t" style="left:327.48px;top:125.49px;font-size:13.6px;color:#a4a4a4;-webkit-text-stroke:0.25px;transform:scaleX(0.85);transform-origin:right center;">24</span><span class="t" style="left:388.40px;top:122.73px;font-size:16.5px;color:#ffffff;letter-spacing:0.192px;-webkit-text-stroke:0.3px;"><span style="color:#b03585;">let</span> viewcontrollers =</span><span class="t" style="left:406.30px;top:141.43px;font-size:16.5px;color:#ffffff;letter-spacing:0.090px;-webkit-text-stroke:0.3px;">[<span style="color:#484ec2;text-decoration:underline;text-decoration-thickness:0.9px;text-underline-offset:1.6px;">ZVideoViewController</span>(),</span><span class="t" style="left:406.30px;top:160.13px;font-size:16.5px;color:#ffffff;letter-spacing:0.058px;-webkit-text-stroke:0.3px;"><span style="color:#3acc81;">ZAudioViewController</span>(),</span><span class="t" style="left:406.30px;top:178.83px;font-size:16.5px;color:#ffffff;letter-spacing:0.054px;-webkit-text-stroke:0.3px;"><span style="color:#3acc81;">ZCaptureViewController</span>(),</span><span class="t" style="left:406.30px;top:197.53px;font-size:16.5px;color:#ffffff;letter-spacing:0.175px;-webkit-text-stroke:0.3px;"><span style="color:#3acc81;">ZSettingViewController</span>()]</span><span class="t" style="left:327.48px;top:218.99px;font-size:13.6px;color:#a4a4a4;-webkit-text-stroke:0.25px;transform:scaleX(0.85);transform-origin:right center;">25</span><span class="t" style="left:327.48px;top:237.69px;font-size:13.6px;color:#a4a4a4;-webkit-text-stroke:0.25px;transform:scaleX(0.85);transform-origin:right center;">26</span><span class="t" style="left:388.40px;top:234.93px;font-size:16.5px;color:#ffffff;letter-spacing:0.134px;-webkit-text-stroke:0.3px;"><span style="color:#b03585;">for</span> i <span style="color:#b03585;">in</span> <span style="color:#766ae8;">0</span>..&lt;iconNames.<span style="color:#3893da;">count</span> {</span><span class="t" style="left:327.48px;top:256.39px;font-size:13.6px;color:#a4a4a4;-webkit-text-stroke:0.25px;transform:scaleX(0.85);transform-origin:right center;">27</span><span class="t" style="left:424.00px;top:272.33px;font-size:16.5px;color:#ffffff;letter-spacing:0.094px;-webkit-text-stroke:0.3px;"><span style="color:#3acc81;">addChildViewController</span></span><span class="t" style="left:424.00px;top:291.03px;font-size:16.5px;color:#ffffff;letter-spacing:0.171px;-webkit-text-stroke:0.3px;">(viewcontrollers[i], iconName:</span><span class="t" style="left:424.00px;top:309.73px;font-size:16.5px;color:#ffffff;letter-spacing:0.289px;-webkit-text-stroke:0.3px;">iconNames[i], title: titles[i])</span><span class="t" style="left:327.48px;top:331.19px;font-size:13.6px;color:#a4a4a4;-webkit-text-stroke:0.25px;transform:scaleX(0.85);transform-origin:right center;">28</span><span class="t" style="left:388.40px;top:328.43px;font-size:16.5px;color:#ffffff;-webkit-text-stroke:0.3px;">}</span><span class="t" style="left:327.48px;top:349.89px;font-size:13.6px;color:#a4a4a4;-webkit-text-stroke:0.25px;transform:scaleX(0.85);transform-origin:right center;">29</span><span class="t" style="left:370.60px;top:347.13px;font-size:16.5px;color:#ffffff;-webkit-text-stroke:0.3px;">}</span><span class="t" style="left:327.48px;top:368.59px;font-size:13.6px;color:#a4a4a4;-webkit-text-stroke:0.25px;transform:scaleX(0.85);transform-origin:right center;">30</span><span class="t" style="left:327.48px;top:387.29px;font-size:13.6px;color:#a4a4a4;-webkit-text-stroke:0.25px;transform:scaleX(0.85);transform-origin:right center;">31</span><span class="t" style="left:370.60px;top:384.53px;font-size:16.5px;color:#ffffff;letter-spacing:0.162px;-webkit-text-stroke:0.3px;"><span style="color:#b03585;">func</span> addChildViewController(viewController:</span><span class="t" style="left:388.40px;top:403.23px;font-size:16.5px;color:#ffffff;letter-spacing:0.116px;-webkit-text-stroke:0.3px;"><span style="color:#3893da;">UIViewController</span>, iconName: <span style="color:#3893da;">String</span>, title:</span><span class="t" style="left:388.40px;top:421.93px;font-size:16.5px;color:#ffffff;letter-spacing:0.111px;-webkit-text-stroke:0.3px;"><span style="color:#3893da;">String</span>) {</span><span class="t" style="left:327.48px;top:443.39px;font-size:13.6px;color:#a4a4a4;-webkit-text-stroke:0.25px;transform:scaleX(0.85);transform-origin:right center;">32</span><span class="t" style="left:388.40px;top:440.63px;font-size:16.5px;color:#ffffff;letter-spacing:0.258px;-webkit-text-stroke:0.3px;">viewController.<span style="color:#3893da;">title</span> = title</span><span class="t" style="left:327.48px;top:462.09px;font-size:13.6px;color:#a4a4a4;-webkit-text-stroke:0.25px;transform:scaleX(0.85);transform-origin:right center;">33</span><span class="t" style="left:388.40px;top:459.33px;font-size:16.5px;color:#ffffff;letter-spacing:0.080px;-webkit-text-stroke:0.3px;">viewController.<span style="color:#3893da;">tabBarItem</span>.<span style="color:#3893da;">image</span> =</span><span class="t" style="left:406.30px;top:478.03px;font-size:16.5px;color:#ffffff;letter-spacing:-0.094px;-webkit-text-stroke:0.3px;"><span style="color:#3893da;">UIImage</span>(named: iconName)</span><span class="t" style="left:327.48px;top:499.49px;font-size:13.6px;color:#a4a4a4;-webkit-text-stroke:0.25px;transform:scaleX(0.85);transform-origin:right center;">34</span><span class="t" style="left:327.48px;top:520.09px;font-size:13.6px;color:#a4a4a4;-webkit-text-stroke:0.25px;transform:scaleX(0.85);transform-origin:right center;">35</span><span class="t" style="left:388.40px;top:517.33px;font-size:16.5px;color:#ffffff;letter-spacing:0.314px;-webkit-text-stroke:0.3px;"><span style="color:#46c553;">//</span></span><svg style="position:absolute;left:400.20px;top:513.27px;overflow:visible;" width="69.2" height="28.0" viewBox="-4 -18.63 69.2 28.0"><text x="0" y="0" font-size="15.4" letter-spacing="-0.1" fill="#46c553" stroke="#46c553" stroke-width="0.25" paint-order="stroke" stroke-linejoin="round" style="font-family:'Liberation Sans','Noto Sans CJK SC',sans-serif;white-space:pre;">如果使用</text></svg><span class="t" style="left:472.30px;top:517.33px;font-size:16.5px;color:#ffffff;letter-spacing:-0.055px;-webkit-text-stroke:0.3px;"><span style="color:#46c553;">Tabbar.tintColor</span></span><svg style="position:absolute;left:590.70px;top:513.27px;overflow:visible;" width="69.4" height="28.0" viewBox="-4 -18.63 69.4 28.0"><text x="0" y="0" font-size="15.4" letter-spacing="-0.05" fill="#46c553" stroke="#46c553" stroke-width="0.25" paint-order="stroke" stroke-linejoin="round" style="font-family:'Liberation Sans','Noto Sans CJK SC',sans-serif;white-space:pre;">配置颜色</text></svg><span class="t" style="left:656.60px;top:517.33px;font-size:16.5px;color:#ffffff;-webkit-text-stroke:0.3px;"><span style="color:#46c553;">,</span></span><svg style="position:absolute;left:661.90px;top:513.27px;overflow:visible;" width="39.3" height="28.0" viewBox="-4 -18.63 39.3 28.0"><text x="0" y="0" font-size="15.4" letter-spacing="0.25" fill="#46c553" stroke="#46c553" stroke-width="0.25" paint-order="stroke" stroke-linejoin="round" style="font-family:'Liberation Sans','Noto Sans CJK SC',sans-serif;white-space:pre;">则只</text></svg><svg style="position:absolute;left:402.30px;top:533.95px;overflow:visible;" width="38.8" height="28.0" viewBox="-4 -18.63 38.8 28.0"><text x="0" y="0" font-size="15.4" letter-spacing="0" fill="#46c553" stroke="#46c553" stroke-width="0.25" paint-order="stroke" stroke-linejoin="round" style="font-family:'Liberation Sans','Noto Sans CJK SC',sans-serif;white-space:pre;">能在</text></svg><span class="t" style="left:406.30px;top:558.69px;font-size:16.5px;color:#ffffff;letter-spacing:-0.085px;-webkit-text-stroke:0.3px;"><span style="color:#46c553;">UIImageRenderingModeAlwaysTemplate</span></span><svg style="position:absolute;left:402.30px;top:575.31px;overflow:visible;" width="117.3" height="28.0" viewBox="-4 -18.63 117.3 28.0"><text x="0" y="0" font-size="15.4" letter-spacing="0.22" fill="#46c553" stroke="#46c553" stroke-width="0.25" paint-order="stroke" stroke-linejoin="round" style="font-family:'Liberation Sans','Noto Sans CJK SC',sans-serif;white-space:pre;">模式下实现整个</text></svg><span class="t" style="left:516.00px;top:579.37px;font-size:16.5px;color:#ffffff;letter-spacing:0.057px;-webkit-text-stroke:0.3px;"><span style="color:#46c553;">item</span></span><svg style="position:absolute;left:544.00px;top:575.31px;overflow:visible;" width="117.9" height="28.0" viewBox="-4 -18.63 117.9 28.0"><text x="0" y="0" font-size="15.4" letter-spacing="0.3" fill="#46c553" stroke="#46c553" stroke-width="0.25" paint-order="stroke" stroke-linejoin="round" style="font-family:'Liberation Sans','Noto Sans CJK SC',sans-serif;white-space:pre;">颜色改变的效果</text></svg><span class="t" style="left:327.48px;top:602.81px;font-size:13.6px;color:#a4a4a4;-webkit-text-stroke:0.25px;transform:scaleX(0.85);transform-origin:right center;">36</span><span class="t" style="left:388.40px;top:600.05px;font-size:16.5px;color:#ffffff;letter-spacing:0.314px;-webkit-text-stroke:0.3px;"><span style="color:#46c553;">//</span></span><svg style="position:absolute;left:400.20px;top:595.99px;overflow:visible;" width="84.5" height="28.0" viewBox="-4 -18.63 84.5 28.0"><text x="0" y="0" font-size="15.4" letter-spacing="-0.1" fill="#46c553" stroke="#46c553" stroke-width="0.25" paint-order="stroke" stroke-linejoin="round" style="font-family:'Liberation Sans','Noto Sans CJK SC',sans-serif;white-space:pre;">如果使用了</text></svg><span class="t" style="left:406.30px;top:620.73px;font-size:16.5px;color:#ffffff;letter-spacing:-0.049px;-webkit-text-stroke:0.3px;"><span style="color:#46c553;">UIImageRenderingModeAlwaysOriginal ,</span></span><span class="t" style="left:406.30px;top:641.41px;font-size:16.5px;color:#ffffff;letter-spacing:0.082px;-webkit-text-stroke:0.3px;"><span style="color:#46c553;">item</span></span><svg style="position:absolute;left:434.30px;top:637.35px;overflow:visible;" width="180.9" height="28.0" viewBox="-4 -18.63 180.9 28.0"><text x="0" y="0" font-size="15.4" letter-spacing="0.32" fill="#46c553" stroke="#46c553" stroke-width="0.25" paint-order="stroke" stroke-linejoin="round" style="font-family:'Liberation Sans','Noto Sans CJK SC',sans-serif;white-space:pre;">的图片会保持原来的颜色</text></svg><span class="t" style="left:611.60px;top:641.41px;font-size:16.5px;color:#ffffff;-webkit-text-stroke:0.3px;"><span style="color:#46c553;">,</span></span><svg style="position:absolute;left:612.20px;top:637.35px;overflow:visible;" width="23.7" height="28.0" viewBox="-4 -18.63 23.7 28.0"><text x="0" y="0" font-size="15.4" fill="#46c553" stroke="#46c553" stroke-width="0.25" paint-order="stroke" stroke-linejoin="round" style="font-family:'Liberation Sans','Noto Sans CJK SC',sans-serif;white-space:pre;">但</text></svg><span class="t" style="left:637.00px;top:641.41px;font-size:16.5px;color:#ffffff;letter-spacing:0.183px;-webkit-text-stroke:0.3px;"><span style="color:#46c553;">tintColor</span></span><svg style="position:absolute;left:402.30px;top:658.03px;overflow:visible;" width="179.6" height="28.0" viewBox="-4 -18.63 179.6 28.0"><text x="0" y="0" font-size="15.4" letter-spacing="0.2" fill="#46c553" stroke="#46c553" stroke-width="0.25" paint-order="stroke" stroke-linejoin="round" style="font-family:'Liberation Sans','Noto Sans CJK SC',sans-serif;white-space:pre;">属性修改不了图片的颜色</text></svg><span class="t" style="left:327.48px;top:685.69px;font-size:13.6px;color:#a4a4a4;-webkit-text-stroke:0.25px;transform:scaleX(0.85);transform-origin:right center;">37</span><span class="t" style="left:327.48px;top:704.39px;font-size:13.6px;color:#a4a4a4;-webkit-text-stroke:0.25px;transform:scaleX(0.85);transform-origin:right center;">38</span><span class="t" style="left:388.40px;top:701.63px;font-size:16.5px;color:#ffffff;letter-spacing:0.114px;-webkit-text-stroke:0.3px;"><span style="color:#b03585;">let</span> navCtrler = <span style="color:#3893da;">UINavigationController</span></span><span class="t" style="left:406.30px;top:720.33px;font-size:16.5px;color:#ffffff;letter-spacing:0.144px;-webkit-text-stroke:0.3px;">(rootViewController: viewController)</span><span class="t" style="left:327.48px;top:741.79px;font-size:13.6px;color:#a4a4a4;-webkit-text-stroke:0.25px;transform:scaleX(0.85);transform-origin:right center;">39</span><span class="t" style="left:327.48px;top:760.49px;font-size:13.6px;color:#a4a4a4;-webkit-text-stroke:0.25px;transform:scaleX(0.85);transform-origin:right center;">40</span><span class="t" style="left:388.40px;top:757.73px;font-size:16.5px;color:#ffffff;letter-spacing:0.126px;-webkit-text-stroke:0.3px;"><span style="color:#3893da;">addChildViewController</span>(navCtrler)</span><span class="t" style="left:327.48px;top:779.19px;font-size:13.6px;color:#a4a4a4;-webkit-text-stroke:0.25px;transform:scaleX(0.85);transform-origin:right center;">41</span><span class="t" style="left:370.60px;top:776.43px;font-size:16.5px;color:#ffffff;-webkit-text-stroke:0.3px;">}</span><span class="t" style="left:327.48px;top:797.89px;font-size:13.6px;color:#a4a4a4;-webkit-text-stroke:0.25px;transform:scaleX(0.85);transform-origin:right center;">42</span><span class="t" style="left:352.70px;top:795.13px;font-size:16.5px;color:#ffffff;-webkit-text-stroke:0.3px;">}</span><span class="t" style="left:327.48px;top:816.59px;font-size:13.6px;color:#a4a4a4;-webkit-text-stroke:0.25px;transform:scaleX(0.85);transform-origin:right center;">43</span><span class="t" style="left:743.64px;top:125.49px;font-size:13.6px;color:#a4a4a4;-webkit-text-stroke:0.25px;transform:scaleX(0.85);transform-origin:right center;">1</span><span class="t" style="left:743.64px;top:144.19px;font-size:13.6px;color:#a4a4a4;-webkit-text-stroke:0.25px;transform:scaleX(0.85);transform-origin:right center;">2</span><span class="t" style="left:743.64px;top:162.89px;font-size:13.6px;color:#a4a4a4;-webkit-text-stroke:0.25px;transform:scaleX(0.85);transform-origin:right center;">3</span><span class="t" style="left:743.64px;top:181.59px;font-size:13.6px;color:#a4a4a4;-webkit-text-stroke:0.25px;transform:scaleX(0.85);transform-origin:right center;">4</span><span class="t" style="left:743.64px;top:200.29px;font-size:13.6px;color:#a4a4a4;-webkit-text-stroke:0.25px;transform:scaleX(0.85);transform-origin:right center;">5</span><span class="t" style="left:743.64px;top:218.99px;font-size:13.6px;color:#a4a4a4;-webkit-text-stroke:0.25px;transform:scaleX(0.85);transform-origin:right center;">6</span><span class="t" style="left:743.64px;top:237.69px;font-size:13.6px;color:#a4a4a4;-webkit-text-stroke:0.25px;transform:scaleX(0.85);transform-origin:right center;">7</span><span class="t" style="left:743.64px;top:256.39px;font-size:13.6px;color:#a4a4a4;-webkit-text-stroke:0.25px;transform:scaleX(0.85);transform-origin:right center;">8</span><span class="t" style="left:743.64px;top:275.09px;font-size:13.6px;color:#a4a4a4;-webkit-text-stroke:0.25px;transform:scaleX(0.85);transform-origin:right center;">9</span><span class="t" style="left:736.08px;top:293.79px;font-size:13.6px;color:#a4a4a4;-webkit-text-stroke:0.25px;transform:scaleX(0.85);transform-origin:right center;">10</span><span class="t" style="left:737.08px;top:312.49px;font-size:13.6px;color:#a4a4a4;-webkit-text-stroke:0.25px;transform:scaleX(0.85);transform-origin:right center;">11</span><span class="t" style="left:736.08px;top:349.89px;font-size:13.6px;color:#a4a4a4;-webkit-text-stroke:0.25px;transform:scaleX(0.85);transform-origin:right center;">12</span><span class="t" style="left:736.08px;top:368.59px;font-size:13.6px;color:#a4a4a4;-webkit-text-stroke:0.25px;transform:scaleX(0.85);transform-origin:right center;">13</span><span class="t" style="left:736.08px;top:387.29px;font-size:13.6px;color:#a4a4a4;-webkit-text-stroke:0.25px;transform:scaleX(0.85);transform-origin:right center;">14</span><span class="t" style="left:736.08px;top:405.99px;font-size:13.6px;color:#a4a4a4;-webkit-text-stroke:0.25px;transform:scaleX(0.85);transform-origin:right center;">15</span><span class="t" style="left:736.08px;top:443.39px;font-size:13.6px;color:#a4a4a4;-webkit-text-stroke:0.25px;transform:scaleX(0.85);transform-origin:right center;">16</span><span class="t" style="left:736.08px;top:462.09px;font-size:13.6px;color:#a4a4a4;-webkit-text-stroke:0.25px;transform:scaleX(0.85);transform-origin:right center;">17</span><span class="t" style="left:761.60px;top:122.73px;font-size:16.5px;color:#ffffff;letter-spacing:0.264px;-webkit-text-stroke:0.3px;"><span style="color:#46c553;">//</span></span><span class="t" style="left:761.60px;top:141.43px;font-size:16.5px;color:#ffffff;letter-spacing:0.239px;-webkit-text-stroke:0.3px;"><span style="color:#46c553;">//  ZSettingViewController.swift</span></span><span class="t" style="left:761.60px;top:160.13px;font-size:16.5px;color:#ffffff;letter-spacing:0.010px;-webkit-text-stroke:0.3px;"><span style="color:#46c553;">//  ZPlayer</span></span><span class="t" style="left:761.60px;top:178.83px;font-size:16.5px;color:#ffffff;letter-spacing:0.264px;-webkit-text-stroke:0.3px;"><span style="color:#46c553;">//</span></span><span class="t" style="left:761.60px;top:197.53px;font-size:16.5px;color:#ffffff;letter-spacing:0.036px;-webkit-text-stroke:0.3px;"><span style="color:#46c553;">//  Created by Zed on 5/15/16.</span></span><span class="t" style="left:761.60px;top:216.23px;font-size:16.5px;color:#ffffff;letter-spacing:0.219px;-webkit-text-stroke:0.3px;"><span style="color:#46c553;">//  Copyright © 2016 itcast. All rights reserved.</span></span><span class="t" style="left:761.60px;top:234.93px;font-size:16.5px;color:#ffffff;letter-spacing:0.264px;-webkit-text-stroke:0.3px;"><span style="color:#46c553;">//</span></span><span class="t" style="left:761.60px;top:272.33px;font-size:16.5px;color:#ffffff;letter-spacing:0.184px;-webkit-text-stroke:0.3px;"><span style="color:#b03585;">import</span> UIKit</span><span class="t" style="left:761.60px;top:309.73px;font-size:16.5px;color:#ffffff;letter-spacing:0.131px;-webkit-text-stroke:0.3px;"><span style="color:#b03585;">internal class</span> ZSettingViewController :</span><span class="t" style="left:779.20px;top:328.43px;font-size:16.5px;color:#ffffff;letter-spacing:0.068px;-webkit-text-stroke:0.3px;"><span style="color:#3893da;">ZBaseViewController</span> {</span><span class="t" style="left:779.20px;top:365.83px;font-size:16.5px;color:#ffffff;letter-spacing:0.116px;-webkit-text-stroke:0.3px;"><span style="color:#b03585;">override internal func</span> viewDidLoad()</span><span class="t" style="left:779.20px;top:403.23px;font-size:16.5px;color:#ffffff;letter-spacing:0.178px;-webkit-text-stroke:0.3px;"><span style="color:#b03585;">override internal func</span></span><span class="t" style="left:797.50px;top:421.93px;font-size:16.5px;color:#ffffff;letter-spacing:-0.014px;-webkit-text-stroke:0.3px;">didReceiveMemoryWarning()</span><span class="t" style="left:761.60px;top:440.63px;font-size:16.5px;color:#ffffff;-webkit-text-stroke:0.3px;">}</span><div style="position:absolute;left:1128.4px;top:93px;width:1px;height:739px;background:#cacaca;"></div><div style="position:absolute;left:1129px;top:120px;width:256px;height:1px;background:#c2c2c2;"></div><svg style="position:absolute;left:1235.6px;top:98.8px;overflow:visible;" width="12.6" height="14.6" viewBox="0 0 12.6 14.6"><path d="M0.9 0.9H7.6L11.7 5V13.7H0.9Z" fill="#eaf2fd" stroke="#2e5fba" stroke-width="1.75" stroke-linejoin="round"/><path d="M7.6 0.9V5H11.7" fill="none" stroke="#2e5fba" stroke-width="1.4000000000000001" stroke-linejoin="round"/></svg><svg style="position:absolute;left:1264.8px;top:99.6px;overflow:visible;" width="13.4" height="13.4" viewBox="0 0 13.4 13.4"><circle cx="6.7" cy="6.7" r="5.9" fill="none" stroke="#4a4a4a" stroke-width="1.1"/></svg><span class="t" style="left:1268.55px;top:101.73px;font-size:10px;color:#3a3a3a;font-weight:700;">?</span><span class="t" style="left:1135.00px;top:124.49px;font-size:11px;color:#222;font-weight:700;letter-spacing:-0.097px;">Identity and Type</span><span class="t" style="left:1180.57px;top:148.51px;font-size:10.5px;color:#2e2e2e;letter-spacing:-0.129px;">Name</span><div style="position:absolute;left:1213.3px;top:144.6px;width:164px;height:16.4px;box-sizing:border-box;background:#fff;border:1px solid #d4d4d4;border-top-color:#c2c2c2;"></div><span class="t" style="left:1216.60px;top:148.09px;font-size:11px;color:#262626;letter-spacing:0.387px;">ZTabbarController.swift</span><span class="t" style="left:1185.63px;top:170.51px;font-size:10.5px;color:#2e2e2e;letter-spacing:-0.066px;">Type</span><div style="position:absolute;left:1213.3px;top:167.2px;width:164px;height:16.2px;border-radius:3.5px;background:linear-gradient(#ffffff,#f7f7f7);box-shadow:0 0.5px 1.2px rgba(0,0,0,0.35),0 0 0 0.5px rgba(0,0,0,0.1);"></div><div style="position:absolute;left:1363.4px;top:167.2px;width:13.9px;height:16.2px;border-radius:0 3.5px 3.5px 0;background:linear-gradient(#9a9a9a,#868686);"></div><svg style="position:absolute;left:1366.4px;top:169.79999999999998px;overflow:visible;" width="8" height="11" viewBox="0 0 8 11"><path d="M1.2 4.2L4 1.4L6.8 4.2M1.2 6.8L4 9.6L6.8 6.8" fill="none" stroke="#fff" stroke-width="1.2"/></svg><span class="t" style="left:1220.60px;top:170.09px;font-size:11px;color:#262626;letter-spacing:0.342px;">Default - Swift Source</span><div style="position:absolute;left:1137px;top:188.6px;width:240px;height:1px;background:#d6d6d6;"></div><span class="t" style="left:1167.80px;top:196.91px;font-size:10.5px;color:#2e2e2e;letter-spacing:0.100px;">Location</span><div style="position:absolute;left:1213.3px;top:193.7px;width:164px;height:16.2px;border-radius:3.5px;background:linear-gradient(#ffffff,#f7f7f7);box-shadow:0 0.5px 1.2px rgba(0,0,0,0.35),0 0 0 0.5px rgba(0,0,0,0.1);"></div><div style="position:absolute;left:1363.4px;top:193.7px;width:13.9px;height:16.2px;border-radius:0 3.5px 3.5px 0;background:linear-gradient(#9a9a9a,#868686);"></div><svg style="position:absolute;left:1366.4px;top:196.29999999999998px;overflow:visible;" width="8" height="11" viewBox="0 0 8 11"><path d="M1.2 4.2L4 1.4L6.8 4.2M1.2 6.8L4 9.6L6.8 6.8" fill="none" stroke="#fff" stroke-width="1.2"/></svg><span class="t" style="left:1220.60px;top:196.59px;font-size:11px;color:#262626;letter-spacing:0.194px;">Relative to Group</span><span class="t" style="left:1215.00px;top:216.09px;font-size:11px;color:#262626;letter-spacing:0.370px;">ZTabbarController.swift</span><svg style="position:absolute;left:1360.6px;top:216.4px;overflow:visible;" width="12.6" height="10" viewBox="0 0 12.6 10"><path d="M0.4 1.2Q0.4 0.4 1.2 0.4H4.2L5.2 1.8H11.4Q12.2 1.8 12.2 2.6V9.6H0.4Z" fill="#8e8e8e"/><path d="M0.4 3.4H12.2" stroke="#b5b5b5" stroke-width="0.7"/></svg><span class="t" style="left:1167.60px;top:234.31px;font-size:10.5px;color:#2e2e2e;letter-spacing:-0.104px;">Full Path</span><span class="t" style="left:1215.00px;top:233.89px;font-size:11px;color:#262626;letter-spacing:0.322px;">/Users/Zed/Developer/</span><span class="t" style="left:1215.00px;top:247.74px;font-size:11px;color:#262626;letter-spacing:0.151px;">ZPlayer/ZPlayer/ZPlayer/</span><span class="t" style="left:1215.00px;top:261.59px;font-size:11px;color:#262626;letter-spacing:0.279px;">Classes/Module/Main/</span><span class="t" style="left:1215.00px;top:275.44px;font-size:11px;color:#262626;letter-spacing:0.370px;">ZTabbarController.swift</span><svg style="position:absolute;left:1344.8px;top:275.6px;overflow:visible;" width="10.6" height="10.6" viewBox="0 0 10.6 10.6"><circle cx="5.3" cy="5.3" r="5" fill="#9a9a9a"/><path d="M2.6 5.3H7.6M5.6 3.2L7.8 5.3L5.6 7.4" fill="none" stroke="#fff" stroke-width="1.2"/></svg><div style="position:absolute;left:1129px;top:302.5px;width:256px;height:1px;background:#d0d0d0;"></div><span class="t" style="left:1135.00px;top:306.93px;font-size:10.6px;color:#222;font-weight:700;letter-spacing:-0.129px;">On Demand Resource Tags</span><div style="position:absolute;left:1138.4px;top:326.8px;width:238.8px;height:18.6px;box-sizing:border-box;background:#fff;border:1px solid #dcdcdc;"></div><span class="t" style="left:1142.00px;top:330.19px;font-size:11px;color:#c4c4c4;letter-spacing:0.245px;">Only resources are taggable</span><div style="position:absolute;left:1129px;top:361.6px;width:256px;height:1px;background:#d0d0d0;"></div><span class="t" style="left:1135.00px;top:365.99px;font-size:11px;color:#222;font-weight:700;letter-spacing:-0.168px;">Target Membership</span><div style="position:absolute;left:1129px;top:380.4px;width:256px;height:59px;background:#fff;border-top:1px solid #cfcfcf;border-bottom:1px solid #d6d6d6;box-sizing:border-box;"></div><svg style="position:absolute;left:1133px;top:384.3px;overflow:visible;" width="11.4" height="11.4" viewBox="0 0 11.4 11.4"><rect x="0.4" y="0.4" width="10.6" height="10.6" rx="2.2" fill="#9c9c9c"/><path d="M2.6 5.8L4.8 8.2L8.8 2.8" fill="none" stroke="#fff" stroke-width="1.6" stroke-linecap="round" stroke-linejoin="round"/></svg><svg style="position:absolute;left:1152.3px;top:382.2px;overflow:visible;" width="15.8" height="15.8" viewBox="0 0 16 16"><rect width="16" height="16" fill="#2f93dc"/><path d="M4.2 4.2H11.8L5.2 11.6H12.2" stroke="#fff" stroke-width="1.7" fill="none" stroke-linejoin="miter"/><path d="M5.5 8H10.6" stroke="#fff" stroke-width="1.1"/></svg><span class="t" style="left:1171.80px;top:384.39px;font-size:11px;color:#262626;letter-spacing:0.013px;">ZPlayer</span><span class="t" style="left:1135.00px;top:443.09px;font-size:11px;color:#222;font-weight:700;letter-spacing:-0.144px;">Text Settings</span><span class="t" style="left:1141.28px;top:466.61px;font-size:10.5px;color:#2e2e2e;letter-spacing:0.079px;">Text Encoding</span><div style="position:absolute;left:1213.3px;top:463.9px;width:164px;height:16.2px;border-radius:3.5px;background:linear-gradient(#ffffff,#f7f7f7);box-shadow:0 0.5px 1.2px rgba(0,0,0,0.35),0 0 0 0.5px rgba(0,0,0,0.1);"></div><div style="position:absolute;left:1363.4px;top:463.9px;width:13.9px;height:16.2px;border-radius:0 3.5px 3.5px 0;background:linear-gradient(#9a9a9a,#868686);"></div><svg style="position:absolute;left:1366.4px;top:466.5px;overflow:visible;" width="8" height="11" viewBox="0 0 8 11"><path d="M1.2 4.2L4 1.4L6.8 4.2M1.2 6.8L4 9.6L6.8 6.8" fill="none" stroke="#fff" stroke-width="1.2"/></svg><span class="t" style="left:1220.60px;top:466.79px;font-size:11px;color:#262626;letter-spacing:0.326px;">Unicode (UTF-8)</span><span class="t" style="left:1148.14px;top:488.01px;font-size:10.5px;color:#2e2e2e;letter-spacing:-0.060px;">Line Endings</span><div style="position:absolute;left:1213.3px;top:485.6px;width:164px;height:16.2px;border-radius:3.5px;background:linear-gradient(#ffffff,#f7f7f7);box-shadow:0 0.5px 1.2px rgba(0,0,0,0.35),0 0 0 0.5px rgba(0,0,0,0.1);"></div><div style="position:absolute;left:1363.4px;top:485.6px;width:13.9px;height:16.2px;border-radius:0 3.5px 3.5px 0;background:linear-gradient(#9a9a9a,#868686);"></div><svg style="position:absolute;left:1366.4px;top:488.20000000000005px;overflow:visible;" width="8" height="11" viewBox="0 0 8 11"><path d="M1.2 4.2L4 1.4L6.8 4.2M1.2 6.8L4 9.6L6.8 6.8" fill="none" stroke="#fff" stroke-width="1.2"/></svg><span class="t" style="left:1220.60px;top:488.49px;font-size:11px;color:#262626;letter-spacing:0.203px;">Default - OS X / Unix (LF)</span><div style="position:absolute;left:1137px;top:506.4px;width:240px;height:1px;background:#d6d6d6;"></div><span class="t" style="left:1148.29px;top:515.11px;font-size:10.5px;color:#2e2e2e;letter-spacing:0.086px;">Indent Using</span><div style="position:absolute;left:1213.3px;top:512.3px;width:164px;height:16.2px;border-radius:3.5px;background:linear-gradient(#ffffff,#f7f7f7);box-shadow:0 0.5px 1.2px rgba(0,0,0,0.35),0 0 0 0.5px rgba(0,0,0,0.1);"></div><div style="position:absolute;left:1363.4px;top:512.3px;width:13.9px;height:16.2px;border-radius:0 3.5px 3.5px 0;background:linear-gradient(#9a9a9a,#868686);"></div><svg style="position:absolute;left:1366.4px;top:514.9px;overflow:visible;" width="8" height="11" viewBox="0 0 8 11"><path d="M1.2 4.2L4 1.4L6.8 4.2M1.2 6.8L4 9.6L6.8 6.8" fill="none" stroke="#fff" stroke-width="1.2"/></svg><span class="t" style="left:1220.60px;top:515.19px;font-size:11px;color:#262626;letter-spacing:0.116px;">Spaces</span><span class="t" style="left:1175.35px;top:537.61px;font-size:10.5px;color:#2e2e2e;letter-spacing:0.151px;">Widths</span><div style="position:absolute;left:1213.3px;top:533.8px;width:65.8px;height:16.6px;box-sizing:border-box;background:#fff;border:1px solid #d4d4d4;border-top-color:#c2c2c2;"></div><div style="position:absolute;left:1299.7px;top:533.8px;width:65.8px;height:16.6px;box-sizing:border-box;background:#fff;border:1px solid #d4d4d4;border-top-color:#c2c2c2;"></div><span class="t" style="left:1268.80px;top:537.29px;font-size:11px;color:#262626;">4</span><span class="t" style="left:1355.20px;top:537.29px;font-size:11px;color:#262626;">4</span><div style="position:absolute;left:1281.4px;top:533.4px;width:9px;height:17.4px;border-radius:4.5px;background:#fff;box-shadow:0 0.5px 1px rgba(0,0,0,0.4),0 0 0 0.5px rgba(0,0,0,0.12);"></div><svg style="position:absolute;left:1282.8000000000002px;top:535.6px;overflow:visible;" width="6.4" height="13" viewBox="0 0 6.4 13"><path d="M0.6 4L3.2 1.4L5.8 4M0.6 9L3.2 11.6L5.8 9" fill="none" stroke="#555" stroke-width="1.1"/></svg><div style="position:absolute;left:1367.8px;top:533.4px;width:9px;height:17.4px;border-radius:4.5px;background:#fff;box-shadow:0 0.5px 1px rgba(0,0,0,0.4),0 0 0 0.5px rgba(0,0,0,0.12);"></div><svg style="position:absolute;left:1369.2px;top:535.6px;overflow:visible;" width="6.4" height="13" viewBox="0 0 6.4 13"><path d="M0.6 4L3.2 1.4L5.8 4M0.6 9L3.2 11.6L5.8 9" fill="none" stroke="#555" stroke-width="1.1"/></svg><span class="t" style="left:1237.13px;top:551.41px;font-size:10.5px;color:#2e2e2e;">Tab</span><span class="t" style="left:1317.80px;top:551.41px;font-size:10.5px;color:#2e2e2e;">Indent</span><svg style="position:absolute;left:1212.6px;top:569.5px;overflow:visible;" width="11.4" height="11.4" viewBox="0 0 11.4 11.4"><rect x="0.4" y="0.4" width="10.6" height="10.6" rx="2.2" fill="#9c9c9c"/><path d="M2.6 5.8L4.8 8.2L8.8 2.8" fill="none" stroke="#fff" stroke-width="1.6" stroke-linecap="round" stroke-linejoin="round"/></svg><span class="t" style="left:1229.40px;top:569.39px;font-size:11px;color:#262626;letter-spacing:0.183px;">Wrap lines</span><div style="position:absolute;left:1129px;top:591px;width:256px;height:241px;background:#fff;border-radius:0 0 4px 0;"></div><div style="position:absolute;left:1129px;top:591px;width:256px;height:1px;background:#cfcfcf;"></div><div style="position:absolute;left:1129px;top:618.9px;width:256px;height:1px;background:#d0d0d0;"></div><svg style="position:absolute;left:1206.2px;top:598.4px;overflow:visible;" width="12.6" height="14.6" viewBox="0 0 12.6 14.6"><path d="M0.9 0.9H7.6L11.7 5V13.7H0.9Z" fill="#eaf2fd" stroke="#2e5fba" stroke-width="1.8" stroke-linejoin="round"/><path d="M7.6 0.9V5H11.7" fill="none" stroke="#2e5fba" stroke-width="1.4400000000000002" stroke-linejoin="round"/></svg><span class="t" style="left:1236.05px;top:598.60px;font-size:13px;color:#555;letter-spacing:2.8px;">{}</span><svg style="position:absolute;left:1264.6px;top:599.2px;overflow:visible;" width="13.6" height="13.6" viewBox="0 0 13.6 13.6"><circle cx="6.8" cy="6.8" r="6" fill="none" stroke="#555" stroke-width="1.3"/><rect x="4.5" y="4.5" width="4.6" height="4.6" fill="none" stroke="#555" stroke-width="1.4"/></svg><svg style="position:absolute;left:1294.2px;top:599.8px;overflow:visible;" width="13.8" height="12.4" viewBox="0 0 13.8 12.4"><g fill="none" stroke="#555" stroke-width="1.1"><rect x="0.6" y="0.6" width="12.6" height="11.2"/><path d="M3.2 0.6V11.8M10.6 0.6V11.8"/><path d="M0.6 3.4H3.2M0.6 6.2H3.2M0.6 9H3.2M10.6 3.4H13.2M10.6 6.2H13.2M10.6 9H13.2" stroke-width="0.8"/></g></svg><svg style="position:absolute;left:1143px;top:628.2px;overflow:visible;" width="35" height="44.6" viewBox="0 0 35 44.6"><defs><linearGradient id="pg628" x1="0" y1="0" x2="1" y2="1"><stop offset="0" stop-color="#ffffff"/><stop offset="1" stop-color="#f1f1f1"/></linearGradient></defs><path d="M0.6 0.6H22L34.4 13V44H0.6Z" fill="url(#pg628)" stroke="#dedede" stroke-width="0.9"/><path d="M22 0.6V13H34.4Z" fill="#f0f0f0" stroke="#dcdcdc" stroke-width="0.8"/><rect x="7" y="15.2" width="20.4" height="20.4" rx="3" fill="#8e7cc3"/></svg><span class="t" style="left:1153.51px;top:644.74px;font-size:18.5px;color:#fff;-webkit-text-stroke:0.5px;">C</span><span class="t" style="left:1189.20px;top:639.09px;font-size:11px;color:#111;font-weight:700;letter-spacing:0.126px;">Cocoa Touch Class</span><span class="t" style="left:1295.80px;top:639.51px;font-size:10.5px;color:#222;letter-spacing:0.141px;">- A Cocoa</span><span class="t" style="left:1189.20px;top:651.91px;font-size:10.5px;color:#222;letter-spacing:0.049px;">Touch class</span><div style="position:absolute;left:1134px;top:681.6px;width:246px;height:1px;background:#dedede;"></div><svg style="position:absolute;left:1143px;top:690.2px;overflow:visible;" width="35" height="44.6" viewBox="0 0 35 44.6"><defs><linearGradient id="pg690" x1="0" y1="0" x2="1" y2="1"><stop offset="0" stop-color="#ffffff"/><stop offset="1" stop-color="#f1f1f1"/></linearGradient></defs><path d="M0.6 0.6H22L34.4 13V44H0.6Z" fill="url(#pg690)" stroke="#dedede" stroke-width="0.9"/><path d="M22 0.6V13H34.4Z" fill="#f0f0f0" stroke="#dcdcdc" stroke-width="0.8"/><rect x="7" y="15.2" width="20.4" height="20.4" rx="3" fill="#6a9ad6"/></svg><span class="t" style="left:1154.54px;top:706.74px;font-size:18.5px;color:#fff;-webkit-text-stroke:0.5px;">T</span><span class="t" style="left:1189.20px;top:701.09px;font-size:11px;color:#111;font-weight:700;letter-spacing:0.188px;">UI Test Case Class</span><span class="t" style="left:1293.40px;top:701.51px;font-size:10.5px;color:#222;letter-spacing:0.232px;">- A class</span><span class="t" style="left:1189.20px;top:713.91px;font-size:10.5px;color:#222;letter-spacing:0.137px;">implementing a unit test</span><div style="position:absolute;left:1134px;top:744.4px;width:246px;height:1px;background:#dedede;"></div><svg style="position:absolute;left:1143px;top:752.6px;overflow:visible;" width="35" height="44.6" viewBox="0 0 35 44.6"><defs><linearGradient id="pg752" x1="0" y1="0" x2="1" y2="1"><stop offset="0" stop-color="#ffffff"/><stop offset="1" stop-color="#f1f1f1"/></linearGradient></defs><path d="M0.6 0.6H22L34.4 13V44H0.6Z" fill="url(#pg752)" stroke="#dedede" stroke-width="0.9"/><path d="M22 0.6V13H34.4Z" fill="#f0f0f0" stroke="#dcdcdc" stroke-width="0.8"/><rect x="7" y="15.2" width="20.4" height="20.4" rx="3" fill="#6a9ad6"/></svg><span class="t" style="left:1154.54px;top:769.14px;font-size:18.5px;color:#fff;-webkit-text-stroke:0.5px;">T</span><span class="t" style="left:1189.20px;top:763.49px;font-size:11px;color:#111;font-weight:700;letter-spacing:0.199px;">Unit Test Case Class</span><span class="t" style="left:1304.40px;top:763.91px;font-size:10.5px;color:#222;letter-spacing:0.232px;">- A class</span><span class="t" style="left:1189.20px;top:776.31px;font-size:10.5px;color:#222;letter-spacing:0.137px;">implementing a unit test</span><div style="position:absolute;left:1129px;top:803.4px;width:256px;height:1px;background:#d0d0d0;"></div><svg style="position:absolute;left:1137px;top:812.4px;overflow:visible;" width="13.4" height="12.6" viewBox="0 0 13.4 12.6"><g fill="none" stroke="#6a6a6a" stroke-width="1"><rect x="0.5" y="0.5" width="5.2" height="4.8"/><rect x="7.7" y="0.5" width="5.2" height="4.8"/><rect x="0.5" y="7.3" width="5.2" height="4.8"/><rect x="7.7" y="7.3" width="5.2" height="4.8"/></g></svg><div style="position:absolute;left:1157.6px;top:808px;width:222px;height:20.5px;box-sizing:border-box;border:1px solid #c6c6c6;border-radius:4px;background:#fff;"></div><svg style="position:absolute;left:1162px;top:812px;overflow:visible;" width="13" height="13" viewBox="0 0 13 13"><circle cx="6.5" cy="6.5" r="5.7" fill="none" stroke="#8a8a8a" stroke-width="1.1"/><path d="M2.6 7.2C2.6 3.4 10.4 3.4 10.4 7.2Z" fill="#8a8a8a"/></svg><span class="t" style="left:1179.00px;top:813.09px;font-size:11px;color:#c8c8c8;letter-spacing:0.224px;">Filter</span><div style="position:absolute;left:310.6px;top:93.3px;width:409.4px;height:740.1px;box-sizing:border-box;border:2.7px solid #c3272c;border-radius:4.2px;box-shadow:0 0 1.2px 0 rgba(255,120,120,0.45), inset 0 0 1.2px rgba(255,150,150,0.55);pointer-events:none;clip-path:inset(-4px -4px 2.1px -4px);"></div><div style="position:absolute;left:721.9px;top:92.4px;width:405.4px;height:740.2px;box-sizing:border-box;border:2.5px solid #c3272c;border-radius:4.2px;box-shadow:0 0 1.2px 0 rgba(255,120,120,0.45), inset 0 0 1.2px rgba(255,150,150,0.55);pointer-events:none;clip-path:inset(-4px -4px 0.6px -4px);"></div><div style="position:absolute;left:1173.2px;top:34.6px;width:111.20000000000005px;height:30.6px;box-sizing:border-box;border:2.8px solid #c3272c;border-radius:5.5px;box-shadow:0 0 1.2px 0 rgba(255,120,120,0.45), inset 0 0 1.2px rgba(255,150,150,0.55);pointer-events:none;"></div><span class="t" style="left:1025.40px;top:42.06px;font-size:19.3px;color:#fff;font-weight:700;letter-spacing:-0.151px;-webkit-text-stroke:3.6px #fff;text-shadow:0 0 2px rgba(110,110,110,0.85);">Editor</span><span class="t" style="left:1025.40px;top:42.06px;font-size:19.3px;color:#df1a28;font-weight:700;letter-spacing:-0.151px;-webkit-text-stroke:0.4px #df1a28;">Editor</span><svg style="position:absolute;left:1077.40px;top:37.12px;overflow:visible;filter:drop-shadow(0 0 1px rgba(110,110,110,0.8));" width="67.7" height="32.0" viewBox="-4 -21.57 67.7 32.0"><text x="0" y="0" font-size="18.5" font-weight="700" letter-spacing="1.4" fill="#fff" stroke="#fff" stroke-width="4.4" paint-order="stroke" stroke-linejoin="round" style="font-family:'Liberation Sans','Noto Sans CJK SC',sans-serif;white-space:pre;">的选择</text></svg><svg style="position:absolute;left:1077.40px;top:37.12px;overflow:visible;" width="67.7" height="32.0" viewBox="-4 -21.57 67.7 32.0"><text x="0" y="0" font-size="18.5" font-weight="700" letter-spacing="1.4" fill="#df1a28" stroke="#df1a28" stroke-width="0.4" paint-order="stroke" stroke-linejoin="round" style="font-family:'Liberation Sans','Noto Sans CJK SC',sans-serif;white-space:pre;">的选择</text></svg><svg style="position:absolute;left:1140px;top:42px;overflow:visible;" width="36" height="18" viewBox="0 0 36 18"><path d="M2.6 9L24.5 7.3L23.2 4.8L33 9L23.2 13.2L24.5 10.7Z" fill="#df1a28" stroke="rgba(255,255,255,0.55)" stroke-width="1.6" paint-order="stroke" stroke-linejoin="round"/><path d="M2.6 9L24.5 7.3L23.2 4.8L33 9L23.2 13.2L24.5 10.7Z" fill="#e2151c" stroke="#e2151c" stroke-width="0.5" stroke-linejoin="round"/></svg><span class="t" style="left:452.40px;top:337.61px;font-size:19.6px;color:#fff;font-weight:700;letter-spacing:-0.090px;-webkit-text-stroke:3.6px #fff;text-shadow:0 0 2px rgba(110,110,110,0.85);">Standard</span><span class="t" style="left:452.40px;top:337.61px;font-size:19.6px;color:#df1a28;font-weight:700;letter-spacing:-0.090px;-webkit-text-stroke:0.4px #df1a28;">Standard</span><span class="t" style="left:452.40px;top:360.81px;font-size:19.6px;color:#fff;font-weight:700;letter-spacing:-0.102px;-webkit-text-stroke:3.6px #fff;text-shadow:0 0 2px rgba(110,110,110,0.85);">Editor</span><span class="t" style="left:452.40px;top:360.81px;font-size:19.6px;color:#df1a28;font-weight:700;letter-spacing:-0.102px;-webkit-text-stroke:0.4px #df1a28;">Editor</span><span class="t" style="left:878.40px;top:453.61px;font-size:19.6px;color:#fff;font-weight:700;letter-spacing:0.177px;-webkit-text-stroke:3.6px #fff;text-shadow:0 0 2px rgba(110,110,110,0.85);">Assistant</span><span class="t" style="left:878.40px;top:453.61px;font-size:19.6px;color:#df1a28;font-weight:700;letter-spacing:0.177px;-webkit-text-stroke:0.4px #df1a28;">Assistant</span><span class="t" style="left:878.40px;top:477.01px;font-size:19.6px;color:#fff;font-weight:700;letter-spacing:0.032px;-webkit-text-stroke:3.6px #fff;text-shadow:0 0 2px rgba(110,110,110,0.85);">Editor</span><span class="t" style="left:878.40px;top:477.01px;font-size:19.6px;color:#df1a28;font-weight:700;letter-spacing:0.032px;-webkit-text-stroke:0.4px #df1a28;">Editor</span><svg style="position:absolute;left:1173.20px;top:825.83px;overflow:visible;" width="99.6" height="60.8" viewBox="-4 -42.57 99.6 60.8"><text x="0" y="0" font-size="40.6" font-weight="500" letter-spacing="5.2" fill="#7c7c7c" stroke="#7c7c7c" stroke-width="0.49" paint-order="stroke" stroke-linejoin="round" style="font-family:'Liberation Sans','Noto Sans CJK SC',sans-serif;white-space:pre;">知乎</text></svg><svg style="position:absolute;left:1318.40px;top:825.83px;overflow:visible;" width="92.0" height="60.8" viewBox="-4 -42.57 92.0 60.8"><text x="0" y="0" font-size="40.6" font-weight="500" letter-spacing="1.4" fill="#7c7c7c" stroke="#7c7c7c" stroke-width="0.49" paint-order="stroke" stroke-linejoin="round" style="font-family:'Liberation Sans','Noto Sans CJK SC',sans-serif;white-space:pre;">十四</text></svg><svg style="position:absolute;left:1172.00px;top:824.63px;overflow:visible;" width="99.6" height="60.8" viewBox="-4 -42.57 99.6 60.8"><text x="0" y="0" font-size="40.6" font-weight="500" letter-spacing="5.2" fill="#8a8a8a" stroke="#8a8a8a" stroke-width="0.49" paint-order="stroke" stroke-linejoin="round" style="font-family:'Liberation Sans','Noto Sans CJK SC',sans-serif;white-space:pre;">知乎</text></svg><svg style="position:absolute;left:1317.20px;top:824.63px;overflow:visible;" width="92.0" height="60.8" viewBox="-4 -42.57 92.0 60.8"><text x="0" y="0" font-size="40.6" font-weight="500" letter-spacing="1.4" fill="#8a8a8a" stroke="#8a8a8a" stroke-width="0.49" paint-order="stroke" stroke-linejoin="round" style="font-family:'Liberation Sans','Noto Sans CJK SC',sans-serif;white-space:pre;">十四</text></svg><svg style="position:absolute;left:1170.80px;top:823.43px;overflow:visible;filter:drop-shadow(0 0 0.6px rgba(90,90,90,0.9));" width="99.6" height="60.8" viewBox="-4 -42.57 99.6 60.8"><text x="0" y="0" font-size="40.6" font-weight="500" letter-spacing="5.2" fill="#fff" stroke="#fff" stroke-width="0.49" paint-order="stroke" stroke-linejoin="round" style="font-family:'Liberation Sans','Noto Sans CJK SC',sans-serif;white-space:pre;">知乎</text></svg><svg style="position:absolute;left:1316.00px;top:823.43px;overflow:visible;filter:drop-shadow(0 0 0.6px rgba(90,90,90,0.9));" width="92.0" height="60.8" viewBox="-4 -42.57 92.0 60.8"><text x="0" y="0" font-size="40.6" font-weight="500" letter-spacing="1.4" fill="#fff" stroke="#fff" stroke-width="0.49" paint-order="stroke" stroke-linejoin="round" style="font-family:'Liberation Sans','Noto Sans CJK SC',sans-serif;white-space:pre;">十四</text></svg><span class="t" style="left:1278.40px;top:828.25px;font-size:42px;color:#fff;text-shadow:1.2px 1.2px 0 #8a8a8a,2.4px 2.4px 0 #7c7c7c,0 0 1px rgba(90,90,90,0.9);-webkit-text-stroke:0.7px #fff;transform:scaleX(0.95);transform-origin:left center;">@</span>
</div>
</body></html>
